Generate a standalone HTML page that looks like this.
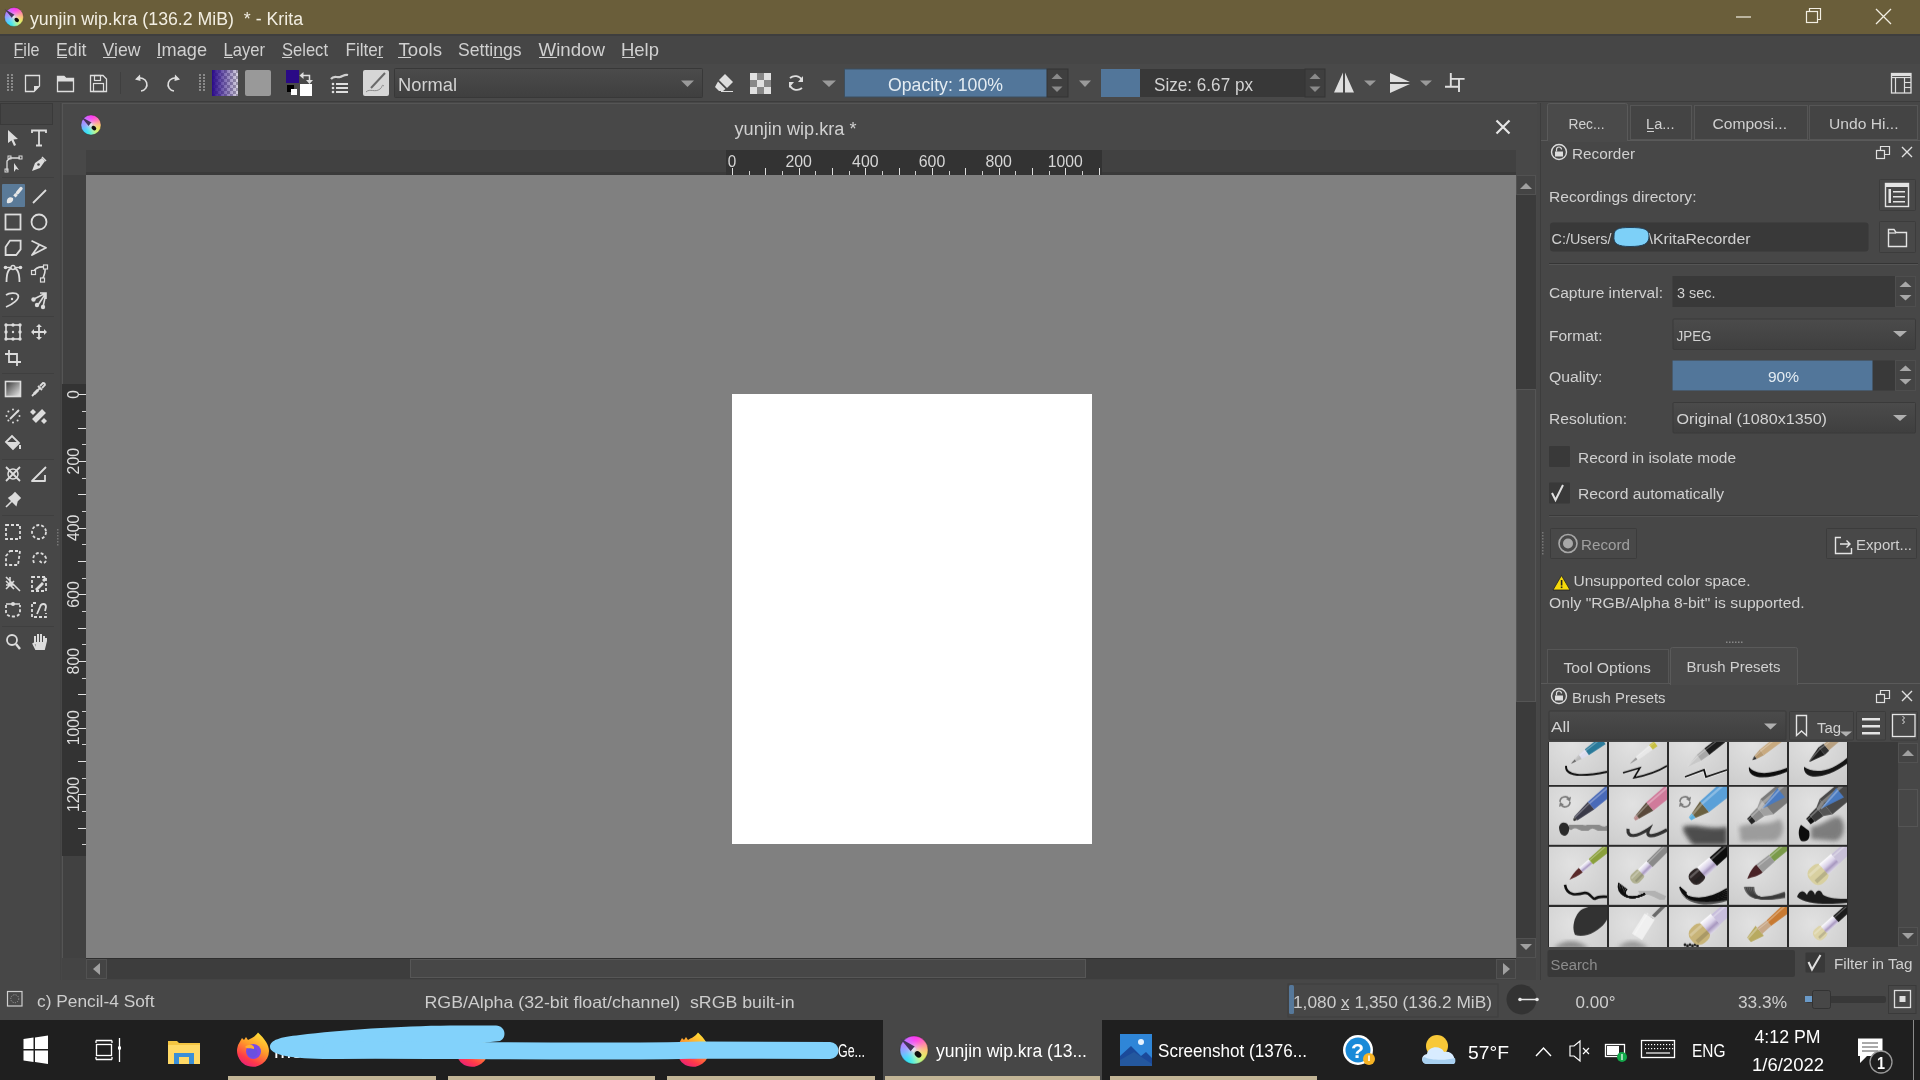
<!DOCTYPE html>
<html><head><meta charset="utf-8">
<style>
*{margin:0;padding:0}
html,body{width:1920px;height:1080px;overflow:hidden;background:#474747}
svg{display:block;will-change:transform}
text{font-family:"Liberation Sans",sans-serif;white-space:pre}
</style></head><body>
<svg width="1920" height="1080" viewBox="0 0 1920 1080" shape-rendering="auto">
<rect x="0" y="0" width="1920" height="1080" fill="#474747" />
<rect x="0" y="0" width="1920" height="34" fill="#6a5e3a" />
<defs><clipPath id="kc157"><circle cx="14" cy="17" r="9.5"/></clipPath><filter id="kf157" x="-50%" y="-50%" width="200%" height="200%"><feGaussianBlur stdDeviation="2.66"/></filter></defs><g clip-path="url(#kc157)"><g filter="url(#kf157)"><path d="M14,17 L7.58,3.22 L20.42,3.22 Z" fill="#ff2cf8"/><path d="M14,17 L19.20,2.72 L28.28,11.80 Z" fill="#ff55c8"/><path d="M14,17 L26.45,8.28 L28.68,20.93 Z" fill="#ff9a8a"/><path d="M14,17 L29.20,17.00 L23.77,28.64 Z" fill="#f8e060"/><path d="M14,17 L26.45,25.72 L15.32,32.14 Z" fill="#c8f870"/><path d="M14,17 L17.93,31.68 L5.28,29.45 Z" fill="#40f0e0"/><path d="M14,17 L7.58,30.78 L-0.68,20.93 Z" fill="#30d8ff"/><path d="M14,17 L0.22,23.42 L0.22,10.58 Z" fill="#8aa0ff"/><path d="M14,17 L-0.28,11.80 L8.80,2.72 Z" fill="#c070ff"/><circle cx="14" cy="17" r="3.3249999999999997" fill="#ffffff" opacity="0.5"/></g></g><circle cx="14" cy="17" r="9.5" fill="none" stroke="#222" stroke-opacity="0.35" stroke-width="0.76"/><g transform="translate(14,17) rotate(40)"><path d="M-12.35,0 L-1.14,-2.09 L-1.14,2.09 Z" fill="#44345a"/><rect x="-1.14" y="-1.425" width="1.9000000000000001" height="2.85" fill="#e0e0ea"/><ellipse cx="3.9899999999999998" cy="0.47500000000000003" rx="2.47" ry="1.9000000000000001" fill="#0e0e0e"/></g>
<text x="30" y="24.6" font-size="18" fill="#f2eee2" textLength="273" lengthAdjust="spacingAndGlyphs" >yunjin wip.kra (136.2 MiB)  * - Krita</text>
<line x1="1736" y1="17" x2="1751" y2="17" stroke="#f2eee2" stroke-width="1.2" />
<rect x="1806.5" y="11.5" width="11" height="11" fill="none" stroke="#f2eee2" stroke-width="1.2" />
<path d="M1809.5,11.5 V8.5 H1820.5 V19.5 H1817.5" fill="none" stroke="#f2eee2" stroke-width="1.2" />
<path d="M1876,9 L1891,24 M1891,9 L1876,24" fill="none" stroke="#f2eee2" stroke-width="1.3" />
<rect x="0" y="34" width="1920" height="30" fill="#464646" />
<rect x="0" y="34" width="1920" height="2" fill="#3e3e3e" />
<text x="13.5" y="55.8" font-size="18.2" fill="#d0d0d0" textLength="26" lengthAdjust="spacingAndGlyphs" >File</text>
<text x="56" y="55.8" font-size="18.2" fill="#d0d0d0" textLength="30.5" lengthAdjust="spacingAndGlyphs" >Edit</text>
<text x="102.5" y="55.8" font-size="18.2" fill="#d0d0d0" textLength="38" lengthAdjust="spacingAndGlyphs" >View</text>
<text x="156.5" y="55.8" font-size="18.2" fill="#d0d0d0" textLength="50.5" lengthAdjust="spacingAndGlyphs" >Image</text>
<text x="223.5" y="55.8" font-size="18.2" fill="#d0d0d0" textLength="41.5" lengthAdjust="spacingAndGlyphs" >Layer</text>
<text x="282" y="55.8" font-size="18.2" fill="#d0d0d0" textLength="46" lengthAdjust="spacingAndGlyphs" >Select</text>
<text x="345.5" y="55.8" font-size="18.2" fill="#d0d0d0" textLength="38" lengthAdjust="spacingAndGlyphs" >Filter</text>
<text x="398.5" y="55.8" font-size="18.2" fill="#d0d0d0" textLength="43.5" lengthAdjust="spacingAndGlyphs" >Tools</text>
<text x="458" y="55.8" font-size="18.2" fill="#d0d0d0" textLength="63.5" lengthAdjust="spacingAndGlyphs" >Settings</text>
<text x="538.5" y="55.8" font-size="18.2" fill="#d0d0d0" textLength="66.5" lengthAdjust="spacingAndGlyphs" >Window</text>
<text x="621" y="55.8" font-size="18.2" fill="#d0d0d0" textLength="38" lengthAdjust="spacingAndGlyphs" >Help</text>
<line x1="14" y1="57.5" x2="24" y2="57.5" stroke="#d0d0d0" stroke-width="1" />
<line x1="57" y1="57.5" x2="67" y2="57.5" stroke="#d0d0d0" stroke-width="1" />
<line x1="103" y1="57.5" x2="116" y2="57.5" stroke="#d0d0d0" stroke-width="1" />
<line x1="157" y1="57.5" x2="162" y2="57.5" stroke="#d0d0d0" stroke-width="1" />
<line x1="224" y1="57.5" x2="233" y2="57.5" stroke="#d0d0d0" stroke-width="1" />
<line x1="282" y1="57.5" x2="292" y2="57.5" stroke="#d0d0d0" stroke-width="1" />
<line x1="377" y1="57.5" x2="383" y2="57.5" stroke="#d0d0d0" stroke-width="1" />
<line x1="398" y1="57.5" x2="411" y2="57.5" stroke="#d0d0d0" stroke-width="1" />
<line x1="493" y1="57.5" x2="505" y2="57.5" stroke="#d0d0d0" stroke-width="1" />
<line x1="539" y1="57.5" x2="557" y2="57.5" stroke="#d0d0d0" stroke-width="1" />
<line x1="622" y1="57.5" x2="635" y2="57.5" stroke="#d0d0d0" stroke-width="1" />
<rect x="0" y="64" width="1920" height="38" fill="#494949" />
<rect x="0" y="101" width="1920" height="1" fill="#3c3c3c" />
<rect x="7" y="74" width="2" height="2" fill="#8a8a8a" />
<rect x="7" y="77" width="2" height="2" fill="#8a8a8a" />
<rect x="7" y="80" width="2" height="2" fill="#8a8a8a" />
<rect x="7" y="83" width="2" height="2" fill="#8a8a8a" />
<rect x="7" y="86" width="2" height="2" fill="#8a8a8a" />
<rect x="7" y="89" width="2" height="2" fill="#8a8a8a" />
<rect x="11" y="74" width="2" height="2" fill="#8a8a8a" />
<rect x="11" y="77" width="2" height="2" fill="#8a8a8a" />
<rect x="11" y="80" width="2" height="2" fill="#8a8a8a" />
<rect x="11" y="83" width="2" height="2" fill="#8a8a8a" />
<rect x="11" y="86" width="2" height="2" fill="#8a8a8a" />
<rect x="11" y="89" width="2" height="2" fill="#8a8a8a" />
<rect x="199" y="74" width="2" height="2" fill="#8a8a8a" />
<rect x="199" y="77" width="2" height="2" fill="#8a8a8a" />
<rect x="199" y="80" width="2" height="2" fill="#8a8a8a" />
<rect x="199" y="83" width="2" height="2" fill="#8a8a8a" />
<rect x="199" y="86" width="2" height="2" fill="#8a8a8a" />
<rect x="199" y="89" width="2" height="2" fill="#8a8a8a" />
<rect x="203" y="74" width="2" height="2" fill="#8a8a8a" />
<rect x="203" y="77" width="2" height="2" fill="#8a8a8a" />
<rect x="203" y="80" width="2" height="2" fill="#8a8a8a" />
<rect x="203" y="83" width="2" height="2" fill="#8a8a8a" />
<rect x="203" y="86" width="2" height="2" fill="#8a8a8a" />
<rect x="203" y="89" width="2" height="2" fill="#8a8a8a" />
<path d="M25.5,75.5 H39.5 V86 L34,91.5 H25.5 Z" fill="none" stroke="#dedede" stroke-width="1.3" />
<path d="M39.5,86 H34 V91.5 Z" fill="#dedede" />
<path d="M57.5,76.5 H64 L66,78.5 H73.5 V91.5 H57.5 Z" fill="none" stroke="#dedede" stroke-width="1.3" />
<path d="M57.5,76.5 H64 L66,78.5 H73.5 V81.5 H57.5 Z" fill="#dedede" />
<path d="M90.5,75.5 H103 L106.5,79 V91.5 H90.5 Z" fill="none" stroke="#dedede" stroke-width="1.3" />
<rect x="94.5" y="75.5" width="6" height="5" fill="none" stroke="#dedede" stroke-width="1.2" />
<rect x="93.5" y="83.5" width="10" height="8" fill="none" stroke="#dedede" stroke-width="1.2" />
<line x1="120.5" y1="72" x2="120.5" y2="94" stroke="#3f3f3f" stroke-width="1" />
<path d="M137,79 A6.5,6.5 0 1 1 141,91" fill="none" stroke="#dedede" stroke-width="1.6" />
<path d="M135,79.5 L140,74.5 L140.5,81 Z" fill="#dedede" />
<path d="M178,79 A6.5,6.5 0 1 0 174,91" fill="none" stroke="#dedede" stroke-width="1.6" />
<path d="M180,79.5 L175,74.5 L174.5,81 Z" fill="#dedede" />
<defs><linearGradient id="gsw" x1="0" x2="1"><stop offset="0" stop-color="#2a0a8a"/><stop offset="1" stop-color="#2a0a8a" stop-opacity="0"/></linearGradient>
<pattern id="chk" width="6" height="6" patternUnits="userSpaceOnUse" x="212" y="70"><rect width="6" height="6" fill="#d8d4e0"/><rect width="3" height="3" fill="#9a94a8"/><rect x="3" y="3" width="3" height="3" fill="#9a94a8"/></pattern></defs>
<rect x="212" y="70" width="26" height="26" fill="url(#chk)" />
<rect x="212" y="70" width="26" height="26" fill="url(#gsw)" />
<rect x="245" y="70" width="26" height="26" fill="#999999" rx="2" />
<rect x="286" y="70" width="13" height="13" fill="#2a0a86" />
<rect x="300" y="84" width="12" height="12" fill="#ffffff" />
<rect x="287" y="85" width="7" height="7" fill="#000000" />
<rect x="291" y="89" width="6" height="6" fill="#ffffff" />
<path d="M303,75.5 H309.5 V81" fill="none" stroke="#dedede" stroke-width="1.5" />
<path d="M299.5,75.5 L303.5,72 V79 Z" fill="#dedede" />
<path d="M306,80 H313 L309.5,84 Z" fill="#dedede" />
<path d="M331,79 C334,75 337,78 340,77 C343,76 345,74 348,75" fill="none" stroke="#d0d0d0" stroke-width="2.2" />
<circle cx="333" cy="84" r="1.3" fill="#dedede" />
<rect x="336" y="83" width="12" height="2" fill="#dedede" />
<circle cx="333" cy="88" r="1.3" fill="#dedede" />
<rect x="336" y="87" width="12" height="2" fill="#dedede" />
<circle cx="333" cy="92" r="1.3" fill="#dedede" />
<rect x="336" y="91" width="12" height="2" fill="#dedede" />
<rect x="363" y="70" width="26" height="26" fill="#d6d6d6" rx="2" />
<path d="M366,92 C370,88 375,93 380,89 C383,87 381,84 384,86" fill="none" stroke="#8a8a8a" stroke-width="1" />
<path d="M371,88 L385,73" fill="none" stroke="#6a6a6a" stroke-width="2" />
<defs><linearGradient id="cmb" x1="0" y1="0" x2="0" y2="1"><stop offset="0" stop-color="#4b4b4b"/><stop offset="1" stop-color="#3f3f3f"/></linearGradient></defs>
<rect x="394.5" y="68.5" width="308" height="29" fill="url(#cmb)" stroke="#383838" stroke-width="1" rx="1" />
<text x="398" y="91" font-size="18.5" fill="#d2d2d2" textLength="59" lengthAdjust="spacingAndGlyphs" >Normal</text>
<path d="M681,80.5 H694 L687.5,87 Z" fill="#9a9a9a" />
<path d="M723,76 L731.5,84.5 L726,90 H719 L715.5,86.5 Z" fill="none" stroke="#dedede" stroke-width="0" />
<path d="M725,74 L733,82 L727,88 L719,80 Z" fill="#dedede" />
<path d="M718,81.5 L725.5,89 L723,91 H719 L715,87 Z" fill="#dedede" />
<line x1="721" y1="91.5" x2="733" y2="91.5" stroke="#dedede" stroke-width="1" />
<rect x="750" y="73" width="7" height="7" fill="#e0e0e0" />
<rect x="750" y="80" width="7" height="7" fill="#888888" />
<rect x="750" y="87" width="7" height="7" fill="#e0e0e0" />
<rect x="757" y="73" width="7" height="7" fill="#888888" />
<rect x="757" y="80" width="7" height="7" fill="#e0e0e0" />
<rect x="757" y="87" width="7" height="7" fill="#888888" />
<rect x="764" y="73" width="7" height="7" fill="#e0e0e0" />
<rect x="764" y="80" width="7" height="7" fill="#888888" />
<rect x="764" y="87" width="7" height="7" fill="#e0e0e0" />
<path d="M790,78 A8,8 0 0 1 802,80" fill="none" stroke="#dedede" stroke-width="1.8" />
<path d="M802,88 A8,8 0 0 1 790,86" fill="none" stroke="#dedede" stroke-width="1.8" />
<path d="M803,76 V82 H798 Z" fill="#dedede" />
<path d="M789,88 V82 H794 Z" fill="#dedede" />
<path d="M822,80.5 H836 L829,87 Z" fill="#9a9a9a" />
<rect x="844.5" y="69" width="203" height="28" fill="#52769a" />
<rect x="844.5" y="69" width="203" height="28" fill="none" stroke="#3d4f5f" stroke-width="1" />
<text x="888" y="90.5" font-size="18.5" fill="#e4ecf2" textLength="115" lengthAdjust="spacingAndGlyphs" >Opacity: 100%</text>
<rect x="1047" y="69" width="21" height="28" fill="#3f3f3f" stroke="#353535" stroke-width="1" />
<path d="M1051.5,79 H1062.5 L1057,73.5 Z" fill="#8a8a8a" />
<path d="M1051.5,86.5 H1062.5 L1057,92 Z" fill="#8a8a8a" />
<path d="M1079,80.5 H1091 L1085,87 Z" fill="#9a9a9a" />
<rect x="1101" y="69" width="204" height="28" fill="#383838" />
<rect x="1101" y="69" width="39" height="28" fill="#52769a" />
<text x="1154" y="91" font-size="18.5" fill="#d2d2d2" textLength="99" lengthAdjust="spacingAndGlyphs" >Size: 6.67 px</text>
<rect x="1305" y="69" width="20" height="28" fill="#3f3f3f" stroke="#353535" stroke-width="1" />
<path d="M1309.5,79 H1320.5 L1315,73.5 Z" fill="#8a8a8a" />
<path d="M1309.5,86.5 H1320.5 L1315,92 Z" fill="#8a8a8a" />
<path d="M1334,92.5 L1343,72.5 V92.5 Z M1345,92.5 V72.5 L1354,92.5 Z" fill="#dedede" />
<path d="M1364,80.5 H1376 L1370,86 Z" fill="#9a9a9a" />
<path d="M1390,73 L1410,82 H1390 Z M1390,84 H1410 L1390,93 Z" fill="#dedede" />
<path d="M1420,80.5 H1432 L1426,86 Z" fill="#9a9a9a" />
<path d="M1450.8,73 V86.8 M1445,86.8 H1459 M1459,78.9 V92 M1450.8,78.9 H1464.6" fill="none" stroke="#dedede" stroke-width="1.9" />
<rect x="1891.5" y="73.5" width="19.5" height="19.5" fill="none" stroke="#dedede" stroke-width="1.3" />
<rect x="1891.5" y="73.5" width="19.5" height="2.5" fill="#dedede" />
<line x1="1891.5" y1="77.5" x2="1911" y2="77.5" stroke="#dedede" stroke-width="1.2" />
<line x1="1895.5" y1="77.5" x2="1895.5" y2="93" stroke="#dedede" stroke-width="1.2" />
<line x1="1904.5" y1="77.5" x2="1904.5" y2="93" stroke="#dedede" stroke-width="1.2" />
<line x1="1904.5" y1="82.5" x2="1911" y2="82.5" stroke="#dedede" stroke-width="1.1" />
<line x1="1904.5" y1="87.5" x2="1911" y2="87.5" stroke="#dedede" stroke-width="1.1" />
<rect x="0" y="102" width="60" height="878" fill="#474747" />
<rect x="0.5" y="103.5" width="52" height="21" fill="#444444" stroke="#3a3a3a" stroke-width="1" />
<line x1="60.5" y1="103" x2="60.5" y2="980" stroke="#434343" stroke-width="1" />
<rect x="2" y="184" width="23" height="23" fill="#5a7a98" rx="1" />
<path d="M8,130 L18,139 L13.5,139.5 L16,145 L14,146 L11.5,140.5 L8,143 Z" fill="#dcdcdc" />
<path d="M32,133 V130.5 H46 V133 M39,130.5 V145.5 M36,145.5 H42" fill="none" stroke="#dcdcdc" stroke-width="1.8" />
<path d="M7,171 V161 L10,158 H20" fill="none" stroke="#dcdcdc" stroke-width="1.3" />
<rect x="5" y="169" width="3" height="3" fill="none" stroke="#dcdcdc" stroke-width="1" />
<rect x="19" y="156" width="3" height="3" fill="none" stroke="#dcdcdc" stroke-width="1" />
<rect x="8" y="156" width="3" height="3" fill="none" stroke="#dcdcdc" stroke-width="1" />
<path d="M14,163 L19,170 L16,169 L14,172 Z" fill="#dcdcdc" />
<path d="M32,171 L35,163 L42,158 L45,161 L40,168 Z" fill="#dcdcdc" />
<circle cx="38.5" cy="164.5" r="1.3" fill="#474747" />
<line x1="42" y1="157" x2="46" y2="161" stroke="#dcdcdc" stroke-width="1.5" />
<line x1="2" y1="177.5" x2="54" y2="177.5" stroke="#3f3f3f" stroke-width="1" />
<path d="M7,203 C6,198 10,196 13,198 C14,201 11,204 7,203 Z" fill="#e6e6e6" />
<path d="M14.5,196.5 L16.5,194" fill="none" stroke="#e6e6e6" stroke-width="3.2" />
<path d="M17.5,192.8 L21,188.5" fill="none" stroke="#e6e6e6" stroke-width="3.4" stroke-linecap="round"/>
<line x1="33" y1="203" x2="46" y2="190" stroke="#dcdcdc" stroke-width="1.8" />
<rect x="5.5" y="214.5" width="15" height="15" fill="none" stroke="#dcdcdc" stroke-width="1.8" />
<circle cx="39" cy="222" r="7.5" fill="none" stroke="#dcdcdc" stroke-width="1.8" />
<path d="M5.6,247 L10,240.6 H20.6 V249.4 L16.2,255 H5.6 Z" fill="none" stroke="#dcdcdc" stroke-width="1.8" />
<path d="M31.5,240.8 L46,247.8 L32,255 L39.5,244.5" fill="none" stroke="#dcdcdc" stroke-width="1.8" stroke-linejoin="round"/>
<path d="M6.5,282 C6.5,272 9,268 13,268 C17,268 19.5,272 19.5,282" fill="none" stroke="#dcdcdc" stroke-width="1.8" />
<line x1="5" y1="267.5" x2="21" y2="267.5" stroke="#dcdcdc" stroke-width="1.4" />
<circle cx="5.5" cy="267.5" r="1.8" fill="#dcdcdc" />
<circle cx="20.5" cy="267.5" r="1.8" fill="#dcdcdc" />
<circle cx="13" cy="267.5" r="2" fill="#474747" stroke="#dcdcdc" stroke-width="1.3" />
<path d="M33.5,272 C35,268 40,266.5 45,267 C45.5,271 44,276 42.5,279" fill="none" stroke="#dcdcdc" stroke-width="1.6" />
<rect x="31.5" y="270.5" width="4" height="4" fill="#474747" stroke="#dcdcdc" stroke-width="1.2" />
<rect x="43.5" y="265" width="4" height="4" fill="#474747" stroke="#dcdcdc" stroke-width="1.2" />
<rect x="40.5" y="278" width="4" height="4" fill="#474747" stroke="#dcdcdc" stroke-width="1.2" />
<path d="M6,307 C13,304 20,299 18,295 C16,292 9,293 6,295" fill="none" stroke="#dcdcdc" stroke-width="1.8" />
<circle cx="12" cy="299" r="1.2" fill="#dcdcdc" />
<path d="M34,299 L46,293 M38,305 L46,293 M43,307 L46,293 M40,293 H46 V299" fill="none" stroke="#dcdcdc" stroke-width="1.6" />
<circle cx="33.5" cy="299.5" r="2.2" fill="#dcdcdc" />
<circle cx="37" cy="305" r="2.2" fill="#dcdcdc" />
<circle cx="43" cy="307" r="2.2" fill="#dcdcdc" />
<line x1="2" y1="316.5" x2="54" y2="316.5" stroke="#3f3f3f" stroke-width="1" />
<rect x="6" y="325" width="14" height="14" fill="none" stroke="#dcdcdc" stroke-width="1.6" />
<circle cx="6" cy="325" r="1.7" fill="#dcdcdc" />
<circle cx="20" cy="325" r="1.7" fill="#dcdcdc" />
<circle cx="6" cy="339" r="1.7" fill="#dcdcdc" />
<circle cx="20" cy="339" r="1.7" fill="#dcdcdc" />
<circle cx="13" cy="325" r="1.7" fill="#dcdcdc" />
<circle cx="13" cy="339" r="1.7" fill="#dcdcdc" />
<circle cx="6" cy="332" r="1.7" fill="#dcdcdc" />
<circle cx="20" cy="332" r="1.7" fill="#dcdcdc" />
<circle cx="13" cy="332" r="1.2" fill="#dcdcdc" />
<path d="M32,332 H46 M39,325 V339" fill="none" stroke="#dcdcdc" stroke-width="1.8" />
<path d="M31,332 L34,329 V335 Z M47,332 L44,329 V335 Z M39,324 L36,327 H42 Z M39,340 L36,337 H42 Z" fill="#dcdcdc" />
<path d="M9,350 V362 H21 M5,354 H17 V366" fill="none" stroke="#dcdcdc" stroke-width="1.8" />
<line x1="2" y1="373.5" x2="54" y2="373.5" stroke="#3f3f3f" stroke-width="1" />
<defs><linearGradient id="tgr" x1="0" y1="0" x2="1" y2="1"><stop offset="0" stop-color="#333"/><stop offset="1" stop-color="#eee"/></linearGradient></defs>
<rect x="5.5" y="381.5" width="15" height="15" fill="url(#tgr)" stroke="#dcdcdc" stroke-width="1.6" />
<path d="M32,396 L40,388 M38,386 L42,390 M40,386 L43,383 A2,2 0 0 1 45,385 L42,388" fill="none" stroke="#dcdcdc" stroke-width="1.8" />
<path d="M33,393 L37,389 L39,391 L35,395 Z" fill="#dcdcdc" />
<circle cx="19.5" cy="416.0" r="1" fill="#dcdcdc" />
<circle cx="17.59619407771256" cy="420.59619407771254" r="1" fill="#dcdcdc" />
<circle cx="13.0" cy="422.5" r="1" fill="#dcdcdc" />
<circle cx="8.403805922287441" cy="420.59619407771254" r="1" fill="#dcdcdc" />
<circle cx="6.5" cy="416.0" r="1" fill="#dcdcdc" />
<circle cx="8.40380592228744" cy="411.40380592228746" r="1" fill="#dcdcdc" />
<circle cx="12.999999999999998" cy="409.5" r="1" fill="#dcdcdc" />
<circle cx="17.596194077712557" cy="411.40380592228746" r="1" fill="#dcdcdc" />
<line x1="10" y1="419" x2="19" y2="410" stroke="#dcdcdc" stroke-width="1.8" />
<line x1="34" y1="421" x2="44" y2="411" stroke="#dcdcdc" stroke-width="5.5" />
<path d="M33,409 L36,412 L33,415 L30,412 Z" fill="#dcdcdc" />
<path d="M44,418 L47,421 L44,424 L41,421 Z" fill="#dcdcdc" />
<path d="M6,442 L12,436 L19,443 L13,449 Z" fill="none" stroke="#dcdcdc" stroke-width="1.8" />
<path d="M6,442 H19 L13,449 Z" fill="#dcdcdc" />
<path d="M20,445 V449" fill="none" stroke="#dcdcdc" stroke-width="2" />
<line x1="2" y1="459.5" x2="54" y2="459.5" stroke="#3f3f3f" stroke-width="1" />
<circle cx="13" cy="474" r="5" fill="none" stroke="#dcdcdc" stroke-width="1.5" />
<line x1="6" y1="467" x2="20" y2="481" stroke="#dcdcdc" stroke-width="1.8" />
<line x1="20" y1="467" x2="6" y2="481" stroke="#dcdcdc" stroke-width="1.8" />
<path d="M46,467 L32,481 H45 V475" fill="none" stroke="#dcdcdc" stroke-width="1.8" stroke-linejoin="round"/>
<path d="M6,507 L12,501 M9,498 L16,505 L17,501 L20,498 L15,493 L12,496 Z" fill="#dcdcdc" stroke="#dcdcdc" stroke-width="1.6" />
<line x1="2" y1="515.5" x2="54" y2="515.5" stroke="#3f3f3f" stroke-width="1" />
<rect x="6" y="525" width="14" height="14" fill="none" stroke="#dcdcdc" stroke-width="1.8" stroke-dasharray="3,2"/>
<circle cx="39" cy="532" r="7" fill="none" stroke="#dcdcdc" stroke-width="1.8" stroke-dasharray="3,2"/>
<path d="M10,551 H20 L18,565 H6 V556 Z" fill="none" stroke="#dcdcdc" stroke-width="1.8" stroke-dasharray="3,2"/>
<path d="M34,563 C30,553 42,549 46,558 C47,563 42,565 39,560" fill="none" stroke="#dcdcdc" stroke-width="1.8" stroke-dasharray="3,2"/>
<path d="M6,577 L20,591 M6,585 H14 M10,577 V585 M6,581 L14,589 M6,589 L14,581" fill="none" stroke="#dcdcdc" stroke-width="1.6" />
<rect x="32" y="577" width="14" height="14" fill="none" stroke="#dcdcdc" stroke-width="1.8" stroke-dasharray="3,2"/>
<path d="M35,589 L42,582 L44,584 L37,591 Z M42,580 L45,577 L47,579 L44,582 Z" fill="#dcdcdc" />
<path d="M6,605 V612 C6,618 20,618 20,612 V605" fill="none" stroke="#dcdcdc" stroke-width="1.8" stroke-dasharray="3,2"/>
<line x1="6" y1="604" x2="20" y2="604" stroke="#dcdcdc" stroke-width="1.5" />
<circle cx="13" cy="604" r="2" fill="#dcdcdc" />
<path d="M36,603 H32 V617 H46 V613" fill="none" stroke="#dcdcdc" stroke-width="1.8" stroke-dasharray="3,2"/>
<path d="M37,614 L40,607 C41,603 46,603 46,607 L45,611" fill="none" stroke="#dcdcdc" stroke-width="1.8" />
<line x1="2" y1="626.5" x2="54" y2="626.5" stroke="#3f3f3f" stroke-width="1" />
<circle cx="12" cy="640" r="5" fill="none" stroke="#dcdcdc" stroke-width="1.8" />
<line x1="16" y1="644" x2="20" y2="649" stroke="#dcdcdc" stroke-width="2.4" />
<path d="M33,643 L36,649 H44 L46,641 V638 M35,644 V636 M38,642 V634 M41,642 V634 M44,642 V636" fill="none" stroke="#dcdcdc" stroke-width="2" />
<path d="M35,642 H45 V648 H36 Z" fill="#dcdcdc" />
<rect x="57" y="529" width="1.5" height="1.5" fill="#777777" />
<rect x="57" y="532" width="1.5" height="1.5" fill="#777777" />
<rect x="57" y="535" width="1.5" height="1.5" fill="#777777" />
<rect x="57" y="538" width="1.5" height="1.5" fill="#777777" />
<rect x="57" y="541" width="1.5" height="1.5" fill="#777777" />
<rect x="57" y="544" width="1.5" height="1.5" fill="#777777" />
<rect x="62" y="103" width="1475" height="877" fill="#484848" />
<line x1="62" y1="103.5" x2="1537" y2="103.5" stroke="#555555" stroke-width="1" />
<line x1="62.5" y1="103" x2="62.5" y2="980" stroke="#555555" stroke-width="1" />
<defs><clipPath id="kc1035"><circle cx="91" cy="125" r="10"/></clipPath><filter id="kf1035" x="-50%" y="-50%" width="200%" height="200%"><feGaussianBlur stdDeviation="2.8000000000000003"/></filter></defs><g clip-path="url(#kc1035)"><g filter="url(#kf1035)"><path d="M91,125 L84.24,110.50 L97.76,110.50 Z" fill="#ff2cf8"/><path d="M91,125 L96.47,109.96 L106.04,119.53 Z" fill="#ff55c8"/><path d="M91,125 L104.11,115.82 L106.45,129.14 Z" fill="#ff9a8a"/><path d="M91,125 L107.00,125.00 L101.28,137.26 Z" fill="#f8e060"/><path d="M91,125 L104.11,134.18 L92.39,140.94 Z" fill="#c8f870"/><path d="M91,125 L95.14,140.45 L81.82,138.11 Z" fill="#40f0e0"/><path d="M91,125 L84.24,139.50 L75.55,129.14 Z" fill="#30d8ff"/><path d="M91,125 L76.50,131.76 L76.50,118.24 Z" fill="#8aa0ff"/><path d="M91,125 L75.96,119.53 L85.53,109.96 Z" fill="#c070ff"/><circle cx="91" cy="125" r="3.5" fill="#ffffff" opacity="0.5"/></g></g><circle cx="91" cy="125" r="10" fill="none" stroke="#222" stroke-opacity="0.35" stroke-width="0.8"/><g transform="translate(91,125) rotate(40)"><path d="M-13.0,0 L-1.2,-2.2 L-1.2,2.2 Z" fill="#44345a"/><rect x="-1.2" y="-1.5" width="2.0" height="3.0" fill="#e0e0ea"/><ellipse cx="4.2" cy="0.5" rx="2.6" ry="2.0" fill="#0e0e0e"/></g>
<text x="734.5" y="135" font-size="18" fill="#d0d0d0" textLength="122" lengthAdjust="spacingAndGlyphs" >yunjin wip.kra *</text>
<path d="M1496.5,120.5 L1509.5,133.5 M1509.5,120.5 L1496.5,133.5" fill="none" stroke="#e6e6e6" stroke-width="2.2" />
<rect x="86" y="150" width="1430" height="25" fill="#414141" />
<rect x="86" y="172" width="1430" height="3" fill="#3a3a3a" />
<rect x="63" y="175" width="23" height="783" fill="#414141" />
<rect x="726" y="150" width="376" height="25" fill="#333333" />
<rect x="62" y="384" width="24" height="472" fill="#333333" />
<line x1="732.5" y1="168" x2="732.5" y2="175" stroke="#e0e0e0" stroke-width="1" />
<line x1="749.5" y1="171" x2="749.5" y2="175" stroke="#d0d0d0" stroke-width="1" />
<line x1="765.5" y1="168" x2="765.5" y2="175" stroke="#e0e0e0" stroke-width="1" />
<line x1="782.5" y1="171" x2="782.5" y2="175" stroke="#d0d0d0" stroke-width="1" />
<line x1="799.5" y1="168" x2="799.5" y2="175" stroke="#e0e0e0" stroke-width="1" />
<line x1="815.5" y1="171" x2="815.5" y2="175" stroke="#d0d0d0" stroke-width="1" />
<line x1="832.5" y1="168" x2="832.5" y2="175" stroke="#e0e0e0" stroke-width="1" />
<line x1="849.5" y1="171" x2="849.5" y2="175" stroke="#d0d0d0" stroke-width="1" />
<line x1="865.5" y1="168" x2="865.5" y2="175" stroke="#e0e0e0" stroke-width="1" />
<line x1="882.5" y1="171" x2="882.5" y2="175" stroke="#d0d0d0" stroke-width="1" />
<line x1="899.5" y1="168" x2="899.5" y2="175" stroke="#e0e0e0" stroke-width="1" />
<line x1="915.5" y1="171" x2="915.5" y2="175" stroke="#d0d0d0" stroke-width="1" />
<line x1="932.5" y1="168" x2="932.5" y2="175" stroke="#e0e0e0" stroke-width="1" />
<line x1="949.5" y1="171" x2="949.5" y2="175" stroke="#d0d0d0" stroke-width="1" />
<line x1="965.5" y1="168" x2="965.5" y2="175" stroke="#e0e0e0" stroke-width="1" />
<line x1="982.5" y1="171" x2="982.5" y2="175" stroke="#d0d0d0" stroke-width="1" />
<line x1="999.5" y1="168" x2="999.5" y2="175" stroke="#e0e0e0" stroke-width="1" />
<line x1="1015.5" y1="171" x2="1015.5" y2="175" stroke="#d0d0d0" stroke-width="1" />
<line x1="1032.5" y1="168" x2="1032.5" y2="175" stroke="#e0e0e0" stroke-width="1" />
<line x1="1049.5" y1="171" x2="1049.5" y2="175" stroke="#d0d0d0" stroke-width="1" />
<line x1="1065.5" y1="168" x2="1065.5" y2="175" stroke="#e0e0e0" stroke-width="1" />
<line x1="1082.5" y1="171" x2="1082.5" y2="175" stroke="#d0d0d0" stroke-width="1" />
<line x1="1099.5" y1="168" x2="1099.5" y2="175" stroke="#e0e0e0" stroke-width="1" />
<text x="727.75" y="167" font-size="16.5" fill="#d6d6d6" textLength="8.5" lengthAdjust="spacingAndGlyphs" >0</text>
<text x="785.4166666666666" y="167" font-size="16.5" fill="#d6d6d6" textLength="26.5" lengthAdjust="spacingAndGlyphs" >200</text>
<text x="852.0833333333334" y="167" font-size="16.5" fill="#d6d6d6" textLength="26.5" lengthAdjust="spacingAndGlyphs" >400</text>
<text x="918.75" y="167" font-size="16.5" fill="#d6d6d6" textLength="26.5" lengthAdjust="spacingAndGlyphs" >600</text>
<text x="985.4166666666667" y="167" font-size="16.5" fill="#d6d6d6" textLength="26.5" lengthAdjust="spacingAndGlyphs" >800</text>
<text x="1047.8333333333333" y="167" font-size="16.5" fill="#d6d6d6" textLength="35" lengthAdjust="spacingAndGlyphs" >1000</text>
<line x1="78" y1="394.5" x2="86" y2="394.5" stroke="#e0e0e0" stroke-width="1" />
<line x1="82" y1="411.5" x2="86" y2="411.5" stroke="#d0d0d0" stroke-width="1" />
<line x1="78" y1="428.5" x2="86" y2="428.5" stroke="#e0e0e0" stroke-width="1" />
<line x1="82" y1="444.5" x2="86" y2="444.5" stroke="#d0d0d0" stroke-width="1" />
<line x1="78" y1="461.5" x2="86" y2="461.5" stroke="#e0e0e0" stroke-width="1" />
<line x1="82" y1="478.5" x2="86" y2="478.5" stroke="#d0d0d0" stroke-width="1" />
<line x1="78" y1="494.5" x2="86" y2="494.5" stroke="#e0e0e0" stroke-width="1" />
<line x1="82" y1="511.5" x2="86" y2="511.5" stroke="#d0d0d0" stroke-width="1" />
<line x1="78" y1="528.5" x2="86" y2="528.5" stroke="#e0e0e0" stroke-width="1" />
<line x1="82" y1="544.5" x2="86" y2="544.5" stroke="#d0d0d0" stroke-width="1" />
<line x1="78" y1="561.5" x2="86" y2="561.5" stroke="#e0e0e0" stroke-width="1" />
<line x1="82" y1="578.5" x2="86" y2="578.5" stroke="#d0d0d0" stroke-width="1" />
<line x1="78" y1="594.5" x2="86" y2="594.5" stroke="#e0e0e0" stroke-width="1" />
<line x1="82" y1="611.5" x2="86" y2="611.5" stroke="#d0d0d0" stroke-width="1" />
<line x1="78" y1="628.5" x2="86" y2="628.5" stroke="#e0e0e0" stroke-width="1" />
<line x1="82" y1="644.5" x2="86" y2="644.5" stroke="#d0d0d0" stroke-width="1" />
<line x1="78" y1="661.5" x2="86" y2="661.5" stroke="#e0e0e0" stroke-width="1" />
<line x1="82" y1="678.5" x2="86" y2="678.5" stroke="#d0d0d0" stroke-width="1" />
<line x1="78" y1="694.5" x2="86" y2="694.5" stroke="#e0e0e0" stroke-width="1" />
<line x1="82" y1="711.5" x2="86" y2="711.5" stroke="#d0d0d0" stroke-width="1" />
<line x1="78" y1="728.5" x2="86" y2="728.5" stroke="#e0e0e0" stroke-width="1" />
<line x1="82" y1="744.5" x2="86" y2="744.5" stroke="#d0d0d0" stroke-width="1" />
<line x1="78" y1="761.5" x2="86" y2="761.5" stroke="#e0e0e0" stroke-width="1" />
<line x1="82" y1="778.5" x2="86" y2="778.5" stroke="#d0d0d0" stroke-width="1" />
<line x1="78" y1="794.5" x2="86" y2="794.5" stroke="#e0e0e0" stroke-width="1" />
<line x1="82" y1="811.5" x2="86" y2="811.5" stroke="#d0d0d0" stroke-width="1" />
<line x1="78" y1="828.5" x2="86" y2="828.5" stroke="#e0e0e0" stroke-width="1" />
<line x1="82" y1="844.5" x2="86" y2="844.5" stroke="#d0d0d0" stroke-width="1" />
<g transform="translate(79,394.5) rotate(-90)"><text x="-4.25" y="0" font-size="16.5" fill="#dedede" textLength="8.5" lengthAdjust="spacingAndGlyphs">0</text></g>
<g transform="translate(79,461.1666666666667) rotate(-90)"><text x="-13.25" y="0" font-size="16.5" fill="#dedede" textLength="26.5" lengthAdjust="spacingAndGlyphs">200</text></g>
<g transform="translate(79,527.8333333333334) rotate(-90)"><text x="-13.25" y="0" font-size="16.5" fill="#dedede" textLength="26.5" lengthAdjust="spacingAndGlyphs">400</text></g>
<g transform="translate(79,594.5) rotate(-90)"><text x="-13.25" y="0" font-size="16.5" fill="#dedede" textLength="26.5" lengthAdjust="spacingAndGlyphs">600</text></g>
<g transform="translate(79,661.1666666666667) rotate(-90)"><text x="-13.25" y="0" font-size="16.5" fill="#dedede" textLength="26.5" lengthAdjust="spacingAndGlyphs">800</text></g>
<g transform="translate(79,727.8333333333333) rotate(-90)"><text x="-17.5" y="0" font-size="16.5" fill="#dedede" textLength="35" lengthAdjust="spacingAndGlyphs">1000</text></g>
<g transform="translate(79,794.5) rotate(-90)"><text x="-17.5" y="0" font-size="16.5" fill="#dedede" textLength="35" lengthAdjust="spacingAndGlyphs">1200</text></g>
<rect x="86" y="175" width="1430" height="783" fill="#808080" />
<rect x="732" y="394" width="360" height="450" fill="#ffffff" />
<rect x="1516" y="175" width="20" height="783" fill="#3b3b3b" />
<rect x="1516.5" y="175.5" width="19" height="19" fill="#444444" stroke="#525252" stroke-width="1" />
<path d="M1520,189 H1532 L1526,183 Z" fill="#a0a0a0" />
<rect x="1516.5" y="389.5" width="19" height="312" fill="#474747" stroke="#555555" stroke-width="1" />
<rect x="1516.5" y="938.5" width="19" height="19" fill="#444444" stroke="#525252" stroke-width="1" />
<path d="M1520,944 H1532 L1526,950 Z" fill="#a0a0a0" />
<rect x="62" y="958" width="1474" height="22" fill="#444444" />
<rect x="86" y="958" width="1430" height="21" fill="#3d3d3d" />
<rect x="86.5" y="959.5" width="20" height="19" fill="#444444" stroke="#525252" stroke-width="1" />
<path d="M100,963 V975 L93,969 Z" fill="#a0a0a0" />
<rect x="410.5" y="959.5" width="675" height="18" fill="#474747" stroke="#575757" stroke-width="1" />
<rect x="1496.5" y="959.5" width="19" height="19" fill="#444444" stroke="#525252" stroke-width="1" />
<path d="M1503,963 V975 L1510,969 Z" fill="#a0a0a0" />
<line x1="86" y1="958.5" x2="1516" y2="958.5" stroke="#2e2e2e" stroke-width="1" />
<rect x="1537" y="102" width="383" height="880" fill="#474747" />
<line x1="1540.5" y1="103" x2="1540.5" y2="980" stroke="#3d3d3d" stroke-width="1" />
<line x1="1541" y1="140.5" x2="1920" y2="140.5" stroke="#5a5a5a" stroke-width="1" />
<rect x="1630.5" y="105.5" width="61" height="34" fill="#444444" stroke="#565656" stroke-width="1" />
<rect x="1694.5" y="105.5" width="113" height="34" fill="#444444" stroke="#565656" stroke-width="1" />
<rect x="1809.5" y="105.5" width="108" height="34" fill="#444444" stroke="#565656" stroke-width="1" />
<path d="M1547.5,141 V105.5 Q1547.5,103.5 1549.5,103.5 H1625.5 Q1627.5,103.5 1627.5,105.5 V141" fill="#4a4a4a" stroke="#5a5a5a" stroke-width="1" />
<rect x="1548" y="139" width="79" height="3" fill="#4a4a4a" />
<text x="1568.5" y="128.5" font-size="15.5" fill="#d0d0d0" textLength="36" lengthAdjust="spacingAndGlyphs" >Rec...</text>
<text x="1646" y="128.5" font-size="15.5" fill="#d0d0d0" textLength="28.5" lengthAdjust="spacingAndGlyphs" >La...</text>
<line x1="1647" y1="131.5" x2="1654" y2="131.5" stroke="#d0d0d0" stroke-width="1" />
<text x="1712.5" y="128.5" font-size="15.5" fill="#d0d0d0" textLength="74.5" lengthAdjust="spacingAndGlyphs" >Composi...</text>
<text x="1829" y="128.5" font-size="15.5" fill="#d0d0d0" textLength="69.5" lengthAdjust="spacingAndGlyphs" >Undo Hi...</text>
<circle cx="1559" cy="152" r="7.5" fill="none" stroke="#dcdcdc" stroke-width="1.4" />
<rect x="1555" y="151.5" width="8" height="5" fill="#dcdcdc" />
<path d="M1556.5,151.5 V149.5 A2.5,2.5 0 0 1 1561.5,149.5" fill="none" stroke="#dcdcdc" stroke-width="1.2" />
<text x="1572" y="158.5" font-size="15.5" fill="#d0d0d0" textLength="63" lengthAdjust="spacingAndGlyphs" >Recorder</text>
<rect x="1876.5" y="150.5" width="8" height="8" fill="none" stroke="#e0e0e0" stroke-width="1.2" />
<path d="M1880.5,150.5 V146.5 H1889.5 V154.5 H1884.5" fill="none" stroke="#e0e0e0" stroke-width="1.2" />
<path d="M1902,147 L1912,157 M1912,147 L1902,157" fill="none" stroke="#e0e0e0" stroke-width="1.4" />
<text x="1549" y="202" font-size="15.5" fill="#d0d0d0" textLength="147.5" lengthAdjust="spacingAndGlyphs" >Recordings directory:</text>
<rect x="1879.5" y="179.5" width="36" height="31" fill="#484848" stroke="#3c3c3c" stroke-width="1" rx="1" />
<rect x="1885.5" y="183.5" width="23" height="23" fill="none" stroke="#e4e4e4" stroke-width="1.4" />
<rect x="1886" y="184" width="22" height="3" fill="#e4e4e4" />
<rect x="1888.5" y="189" width="2.5" height="14" fill="#e4e4e4" />
<rect x="1893" y="191" width="12" height="1.5" fill="#e4e4e4" />
<rect x="1893" y="196" width="12" height="1.5" fill="#e4e4e4" />
<rect x="1893" y="201" width="12" height="1.5" fill="#e4e4e4" />
<rect x="1550" y="222.5" width="318.5" height="29" fill="#393939" rx="3" />
<text x="1551.5" y="244" font-size="15.5" fill="#d0d0d0" textLength="60" lengthAdjust="spacingAndGlyphs" >C:/Users/</text>
<text x="1648.5" y="244" font-size="15.5" fill="#d0d0d0" textLength="102" lengthAdjust="spacingAndGlyphs" >\KritaRecorder</text>
<path d="M1614,236 C1614,229 1618,227.5 1630,227.5 C1644,227.5 1649,229 1649,236 C1649,244 1644,246.5 1630,246.5 C1618,246.5 1613,244 1614,236 Z" fill="#7dd0f8" stroke="#23415a" stroke-width="1" />
<rect x="1879.5" y="221.5" width="36" height="31" fill="#484848" stroke="#3c3c3c" stroke-width="1" rx="1" />
<path d="M1888.5,229.5 H1894 L1896,232.5 H1906.5 V246.5 H1888.5 Z" fill="none" stroke="#e4e4e4" stroke-width="1.4" />
<line x1="1888.5" y1="233" x2="1896" y2="233" stroke="#e4e4e4" stroke-width="1.2" />
<line x1="1549" y1="263.5" x2="1918" y2="263.5" stroke="#353535" stroke-width="1" />
<line x1="1549" y1="264.5" x2="1918" y2="264.5" stroke="#555555" stroke-width="1" />
<text x="1549" y="298" font-size="15.5" fill="#d0d0d0" textLength="114" lengthAdjust="spacingAndGlyphs" >Capture interval:</text>
<rect x="1672.5" y="276" width="223" height="31" fill="#393939" />
<text x="1677" y="298" font-size="15.5" fill="#d2d2d2" textLength="38.5" lengthAdjust="spacingAndGlyphs" >3 sec.</text>
<rect x="1895.5" y="276.5" width="20" height="30" fill="#444444" stroke="#4e4e4e" stroke-width="1" />
<path d="M1899.5,287 H1911.5 L1905.5,281.5 Z" fill="#a8a8a8" />
<path d="M1899.5,295 H1911.5 L1905.5,300.5 Z" fill="#a8a8a8" />
<text x="1549" y="340.5" font-size="15.5" fill="#d0d0d0" textLength="53.5" lengthAdjust="spacingAndGlyphs" >Format:</text>
<rect x="1673" y="319" width="242.5" height="30.5" fill="url(#cmb)" stroke="#3a3a3a" stroke-width="1" rx="1" />
<text x="1676.5" y="340.5" font-size="15.5" fill="#d2d2d2" textLength="35" lengthAdjust="spacingAndGlyphs" >JPEG</text>
<path d="M1893,331 H1907 L1900,337 Z" fill="#b0b0b0" />
<text x="1549" y="382" font-size="15.5" fill="#d0d0d0" textLength="53.5" lengthAdjust="spacingAndGlyphs" >Quality:</text>
<rect x="1672.5" y="360.5" width="223" height="30" fill="#393939" />
<rect x="1672.5" y="360.5" width="200" height="30" fill="#52769a" />
<text x="1768" y="382" font-size="15.5" fill="#e4ecf2" textLength="31" lengthAdjust="spacingAndGlyphs" >90%</text>
<rect x="1895.5" y="360.5" width="20" height="30" fill="#444444" stroke="#4e4e4e" stroke-width="1" />
<path d="M1899.5,371 H1911.5 L1905.5,365.5 Z" fill="#a8a8a8" />
<path d="M1899.5,379 H1911.5 L1905.5,384.5 Z" fill="#a8a8a8" />
<text x="1549" y="424" font-size="15.5" fill="#d0d0d0" textLength="78" lengthAdjust="spacingAndGlyphs" >Resolution:</text>
<rect x="1673" y="402.5" width="242.5" height="30.5" fill="url(#cmb)" stroke="#3a3a3a" stroke-width="1" rx="1" />
<text x="1676.5" y="424" font-size="15.5" fill="#d2d2d2" textLength="150.5" lengthAdjust="spacingAndGlyphs" >Original (1080x1350)</text>
<path d="M1893,415 H1907 L1900,421 Z" fill="#b0b0b0" />
<rect x="1549" y="446" width="21" height="21" fill="#393939" rx="1" />
<text x="1578" y="463" font-size="15.5" fill="#d0d0d0" textLength="158" lengthAdjust="spacingAndGlyphs" >Record in isolate mode</text>
<rect x="1549" y="482.5" width="21" height="21" fill="#393939" rx="1" />
<path d="M1552,493 L1555.5,500 L1563,485" fill="none" stroke="#e0e0e0" stroke-width="2" />
<text x="1578" y="499" font-size="15.5" fill="#d0d0d0" textLength="146" lengthAdjust="spacingAndGlyphs" >Record automatically</text>
<line x1="1549" y1="515.5" x2="1918" y2="515.5" stroke="#3a3a3a" stroke-width="1" />
<line x1="1549" y1="516.5" x2="1918" y2="516.5" stroke="#525252" stroke-width="1" />
<rect x="1542" y="532" width="1.5" height="1.5" fill="#777777" />
<rect x="1542" y="535" width="1.5" height="1.5" fill="#777777" />
<rect x="1542" y="538" width="1.5" height="1.5" fill="#777777" />
<rect x="1542" y="541" width="1.5" height="1.5" fill="#777777" />
<rect x="1542" y="544" width="1.5" height="1.5" fill="#777777" />
<rect x="1542" y="547" width="1.5" height="1.5" fill="#777777" />
<rect x="1542" y="550" width="1.5" height="1.5" fill="#777777" />
<rect x="1542" y="553" width="1.5" height="1.5" fill="#777777" />
<rect x="1550.5" y="528.5" width="86" height="30" fill="#484848" stroke="#3c3c3c" stroke-width="1" rx="1" />
<circle cx="1568" cy="543.5" r="9" fill="none" stroke="#a8a8a8" stroke-width="1.6" />
<circle cx="1568" cy="543.5" r="5" fill="#a8a8a8" />
<text x="1581" y="550" font-size="15.5" fill="#a0a0a0" textLength="49" lengthAdjust="spacingAndGlyphs" >Record</text>
<rect x="1826.5" y="528.5" width="90" height="30" fill="#484848" stroke="#3c3c3c" stroke-width="1" rx="1" />
<path d="M1841,537.5 H1835.5 V553.5 H1851.5 V548" fill="none" stroke="#e4e4e4" stroke-width="1.4" />
<path d="M1840,544 H1850 M1846.5,540.5 L1850,544 L1846.5,547.5" fill="none" stroke="#e4e4e4" stroke-width="1.4" />
<text x="1856" y="550" font-size="15.5" fill="#d0d0d0" textLength="56" lengthAdjust="spacingAndGlyphs" >Export...</text>
<path d="M1561.5,575.5 L1570,590 H1553 Z" fill="#f5d90a" stroke="#222" stroke-width="0.8" />
<rect x="1560.8" y="580" width="1.6" height="5.5" fill="#222" />
<rect x="1560.8" y="586.5" width="1.6" height="1.6" fill="#222" />
<text x="1573.5" y="586" font-size="15.5" fill="#d0d0d0" textLength="177" lengthAdjust="spacingAndGlyphs" >Unsupported color space.</text>
<text x="1549" y="608" font-size="15.5" fill="#d0d0d0" textLength="255.5" lengthAdjust="spacingAndGlyphs" >Only &quot;RGB/Alpha 8-bit&quot; is supported.</text>
<rect x="1726" y="641.5" width="1.5" height="1.5" fill="#888888" />
<rect x="1729" y="641.5" width="1.5" height="1.5" fill="#888888" />
<rect x="1732" y="641.5" width="1.5" height="1.5" fill="#888888" />
<rect x="1735" y="641.5" width="1.5" height="1.5" fill="#888888" />
<rect x="1738" y="641.5" width="1.5" height="1.5" fill="#888888" />
<rect x="1741" y="641.5" width="1.5" height="1.5" fill="#888888" />
<line x1="1541" y1="683.5" x2="1920" y2="683.5" stroke="#5a5a5a" stroke-width="1" />
<rect x="1547.5" y="649.5" width="121" height="34" fill="#444444" stroke="#565656" stroke-width="1" />
<path d="M1670.5,685 V649.5 Q1670.5,647.5 1672.5,647.5 H1795.5 Q1797.5,647.5 1797.5,649.5 V685" fill="#4a4a4a" stroke="#5a5a5a" stroke-width="1" />
<rect x="1671" y="682" width="126" height="3" fill="#4a4a4a" />
<text x="1563.5" y="673" font-size="15.5" fill="#d0d0d0" textLength="87.5" lengthAdjust="spacingAndGlyphs" >Tool Options</text>
<text x="1686.5" y="672" font-size="15.5" fill="#d0d0d0" textLength="94" lengthAdjust="spacingAndGlyphs" >Brush Presets</text>
<circle cx="1559" cy="696" r="7.5" fill="none" stroke="#dcdcdc" stroke-width="1.4" />
<rect x="1555" y="695.5" width="8" height="5" fill="#dcdcdc" />
<path d="M1556.5,695.5 V693.5 A2.5,2.5 0 0 1 1561.5,693.5" fill="none" stroke="#dcdcdc" stroke-width="1.2" />
<text x="1572" y="703" font-size="15.5" fill="#d0d0d0" textLength="93.5" lengthAdjust="spacingAndGlyphs" >Brush Presets</text>
<rect x="1876.5" y="694.5" width="8" height="8" fill="none" stroke="#e0e0e0" stroke-width="1.2" />
<path d="M1880.5,694.5 V690.5 H1889.5 V698.5 H1884.5" fill="none" stroke="#e0e0e0" stroke-width="1.2" />
<path d="M1902,691 L1912,701 M1912,691 L1902,701" fill="none" stroke="#e0e0e0" stroke-width="1.4" />
<rect x="1549" y="711" width="237" height="29" fill="url(#cmb)" stroke="#3a3a3a" stroke-width="1" rx="1" />
<text x="1551" y="732" font-size="15.5" fill="#d2d2d2" textLength="19" lengthAdjust="spacingAndGlyphs" >All</text>
<path d="M1764,723.5 H1777 L1770.5,729.5 Z" fill="#b0b0b0" />
<rect x="1789.5" y="711.5" width="64" height="28.5" fill="#484848" stroke="#3c3c3c" stroke-width="1" rx="1" />
<path d="M1796.5,715.5 H1806.5 V735.5 L1801.5,731 L1796.5,735.5 Z" fill="none" stroke="#e4e4e4" stroke-width="1.4" />
<text x="1817" y="733" font-size="15.5" fill="#d0d0d0" textLength="24" lengthAdjust="spacingAndGlyphs" >Tag</text>
<path d="M1840,731.5 H1852 L1846,736.5 Z" fill="#b0b0b0" />
<rect x="1856.5" y="711.5" width="29" height="28.5" fill="#484848" stroke="#3c3c3c" stroke-width="1" rx="1" />
<rect x="1862" y="718" width="18" height="2.5" fill="#e4e4e4" />
<rect x="1862" y="725" width="18" height="2.5" fill="#e4e4e4" />
<rect x="1862" y="732" width="18" height="2.5" fill="#e4e4e4" />
<rect x="1890.5" y="711.5" width="27" height="28.5" fill="#484848" stroke="#3c3c3c" stroke-width="1" rx="1" />
<rect x="1892.5" y="714.5" width="22.5" height="22" fill="none" stroke="#e4e4e4" stroke-width="1.3" />
<path d="M1902.5,716 L1904.5,718 L1902.5,720 L1904.5,722 L1902.5,724" fill="none" stroke="#e4e4e4" stroke-width="1" />
<rect x="1548" y="742" width="300" height="205" fill="#2a2a2a" />
<rect x="1848" y="742" width="50" height="205" fill="#3a3a3a" />
<defs><filter id="sblur" x="-30%" y="-30%" width="160%" height="160%"><feGaussianBlur stdDeviation="2.2"/></filter><linearGradient id="ferr" x1="0" y1="0" x2="0" y2="1"><stop offset="0" stop-color="#ffffff"/><stop offset="0.45" stop-color="#d8d0e8"/><stop offset="0.7" stop-color="#a898c0"/><stop offset="1" stop-color="#e0dcea"/></linearGradient><filter id="cblur" x="-5%" y="-5%" width="110%" height="110%"><feGaussianBlur stdDeviation="0.45"/></filter></defs>
<defs><radialGradient id="cellg" cx="0.4" cy="0.3" r="0.9"><stop offset="0" stop-color="#e2e2e2"/><stop offset="1" stop-color="#cacaca"/></radialGradient><clipPath id="gridclip"><rect x="1548" y="742.5" width="300" height="204"/></clipPath></defs>
<g clip-path="url(#gridclip)">
<svg x="1549" y="726.8" width="58" height="58" overflow="hidden">
<rect x="0" y="0" width="58" height="58" fill="url(#cellg)" />
<g filter="url(#cblur)">
<path d="M17,39 C16,50 34,50 58,45" fill="none" stroke="#111" stroke-width="1.8" />
<g transform="translate(22.5,36.5) rotate(-36)"><path d="M0,-0.25 L5,-1.25 L5,1.25 L0,0.25 Z" fill="#666" /><path d="M5,-1.25 L11,-2.5 L11,2.5 L5,1.25 Z" fill="#bbbbbb" /><path d="M5,-0.7 L11,-1.4" stroke="#ffffff" stroke-opacity="0.3" stroke-width="0.8"/><path d="M11,-2.5 L19,-3.5 L19,3.5 L11,2.5 Z" fill="#dde" /><path d="M11,-1.4 L19,-1.96" stroke="#ffffff" stroke-opacity="0.3" stroke-width="1.05"/><path d="M19,-3.5 L39,-4.5 L39,4.5 L19,3.5 Z" fill="#2a7a9a" /><path d="M19,-1.96 L39,-2.52" stroke="#ffffff" stroke-opacity="0.3" stroke-width="1.3499999999999999"/></g>
</g>
</svg>
<svg x="1609" y="726.8" width="58" height="58" overflow="hidden">
<rect x="0" y="0" width="58" height="58" fill="url(#cellg)" />
<g filter="url(#cblur)">
<path d="M14,46 L31,41 L25,51 C40,48 50,44 58,39" fill="none" stroke="#111" stroke-width="1.5" />
<g transform="translate(21.5,36.5) rotate(-38)"><path d="M0,-0.25 L8,-1.25 L8,1.25 L0,0.25 Z" fill="#999" /><path d="M8,-2.0 L26,-3.0 L26,3.0 L8,2.0 Z" fill="#e8e8e8" /><path d="M8,-1.12 L26,-1.68" stroke="#ffffff" stroke-opacity="0.3" stroke-width="0.8999999999999999"/><path d="M26,-3.0 L32,-3.0 L32,3.0 L26,3.0 Z" fill="#c8c040" /><path d="M26,-1.68 L32,-1.68" stroke="#ffffff" stroke-opacity="0.3" stroke-width="0.8999999999999999"/></g>
</g>
</svg>
<svg x="1669" y="726.8" width="58" height="58" overflow="hidden">
<rect x="0" y="0" width="58" height="58" fill="url(#cellg)" />
<g filter="url(#cblur)">
<path d="M16,50 L35,43 L37,50 L58,43" fill="none" stroke="#ffffff" stroke-width="3.2" opacity="0.8"/>
<path d="M16,50 L35,43 L37,50 L58,43" fill="none" stroke="#111" stroke-width="1.8" />
<g transform="translate(19,39.5) rotate(-38)"><path d="M0,-0.25 L14,-3.5 L14,3.5 L0,0.25 Z" fill="#c8c8c8" /><path d="M0,-0.14 L14,-1.96" stroke="#ffffff" stroke-opacity="0.3" stroke-width="1.05"/><path d="M14,-3.5 L24,-4.0 L24,4.0 L14,3.5 Z" fill="#a8a8a8" /><path d="M14,-1.96 L24,-2.24" stroke="#ffffff" stroke-opacity="0.3" stroke-width="1.2"/><path d="M24,-4.0 L44,-4.0 L44,4.0 L24,4.0 Z" fill="#1a1a1a" /><path d="M24,-2.24 L44,-2.24" stroke="#ffffff" stroke-opacity="0.3" stroke-width="1.2"/></g>
</g>
</svg>
<svg x="1729" y="726.8" width="58" height="58" overflow="hidden">
<rect x="0" y="0" width="58" height="58" fill="url(#cellg)" />
<g filter="url(#cblur)">
<path d="M20,40 C18,52 36,54 58,45 L58,41 C40,48 26,48 20,40 Z" fill="#111" />
<g transform="translate(23.5,33) rotate(-38)"><path d="M0,-0.25 L4,-2.0 L4,2.0 L0,0.25 Z" fill="#222" /><path d="M0,-0.14 L4,-1.12" stroke="#ffffff" stroke-opacity="0.3" stroke-width="0.8"/><path d="M4,-2.0 L12,-3.5 L12,3.5 L4,2.0 Z" fill="#b89a70" /><path d="M4,-1.12 L12,-1.96" stroke="#ffffff" stroke-opacity="0.3" stroke-width="1.05"/><path d="M12,-3.5 L37,-4.0 L37,4.0 L12,3.5 Z" fill="#c8aa80" /><path d="M12,-1.96 L37,-2.24" stroke="#ffffff" stroke-opacity="0.3" stroke-width="1.2"/></g>
</g>
</svg>
<svg x="1789" y="726.8" width="58" height="58" overflow="hidden">
<rect x="0" y="0" width="58" height="58" fill="url(#cellg)" />
<g filter="url(#cblur)">
<path d="M15,40 C14,53 34,54 58,37 L58,31 C44,44 26,48 15,40 Z" fill="#141414" />
<g transform="translate(20.5,34.5) rotate(-40)"><path d="M0,-0.5 L16,-5.0 L16,5.0 L0,0.5 Z" fill="#1a1a1a" /><path d="M0,-0.28 L16,-2.8" stroke="#ffffff" stroke-opacity="0.3" stroke-width="1.5"/><path d="M16,-5.0 L22,-4.5 L22,4.5 L16,5.0 Z" fill="#333" /><path d="M16,-2.8 L22,-2.52" stroke="#ffffff" stroke-opacity="0.3" stroke-width="1.3499999999999999"/><path d="M22,-4.0 L42,-4.0 L42,4.0 L22,4.0 Z" fill="#b8a080" /><path d="M22,-2.24 L42,-2.24" stroke="#ffffff" stroke-opacity="0.3" stroke-width="1.2"/></g>
</g>
</svg>
<svg x="1549" y="786.8" width="58" height="58" overflow="hidden">
<rect x="0" y="0" width="58" height="58" fill="url(#cellg)" />
<g filter="url(#cblur)">
<path d="M22,40 C28,34 34,46 40,40 C46,35 52,46 58,42" fill="none" stroke="#8a8a8a" stroke-width="6" stroke-linecap="round" filter="url(#cblur)"/>
<path d="M10,40 C12,32 22,36 20,44 C18,52 10,50 10,40 Z" fill="#2a2a2a" />
<path d="M11,15 A5,5 0 0 1 20,12" fill="none" stroke="#7a7a7a" stroke-width="1.6" />
<path d="M21,15 A5,5 0 0 1 12,18" fill="none" stroke="#7a7a7a" stroke-width="1.6" />
<path d="M22,10 L21,15 L17,12 Z" fill="#7a7a7a" />
<path d="M10,20 L11,15 L15,18 Z" fill="#7a7a7a" />
<g transform="translate(24.5,33.5) rotate(-40)"><path d="M0,-1.0 L3,-2.0 L3,2.0 L0,1.0 Z" fill="#333" /><path d="M0,-0.56 L3,-1.12" stroke="#ffffff" stroke-opacity="0.3" stroke-width="0.8"/><path d="M3,-2.5 L23,-5.0 L23,5.0 L3,2.5 Z" fill="#3a3a4a" /><path d="M3,-1.4 L23,-2.8" stroke="#ffffff" stroke-opacity="0.3" stroke-width="1.5"/><path d="M23,-5.0 L48,-5.5 L48,5.5 L23,5.0 Z" fill="#4a6ab8" /><path d="M23,-2.8 L48,-3.08" stroke="#ffffff" stroke-opacity="0.3" stroke-width="1.65"/></g>
</g>
</svg>
<svg x="1609" y="786.8" width="58" height="58" overflow="hidden">
<rect x="0" y="0" width="58" height="58" fill="url(#cellg)" />
<g filter="url(#cblur)">
<path d="M19,42 C18,52 28,50 40,42 C36,50 42,52 58,43" fill="none" stroke="#333" stroke-width="3.2" />
<g transform="translate(25.5,32.5) rotate(-40)"><path d="M0,-1.5 L4,-2.5 L4,2.5 L0,1.5 Z" fill="#b88a8a" /><path d="M0,-0.84 L4,-1.4" stroke="#ffffff" stroke-opacity="0.3" stroke-width="0.8"/><path d="M4,-2.5 L20,-5.5 L20,5.5 L4,2.5 Z" fill="#5a4a3a" /><path d="M4,-1.4 L20,-3.08" stroke="#ffffff" stroke-opacity="0.3" stroke-width="1.65"/><path d="M20,-5.5 L45,-6.0 L45,6.0 L20,5.5 Z" fill="#d07a9a" /><path d="M20,-3.08 L45,-3.36" stroke="#ffffff" stroke-opacity="0.3" stroke-width="1.7999999999999998"/></g>
</g>
</svg>
<svg x="1669" y="786.8" width="58" height="58" overflow="hidden">
<rect x="0" y="0" width="58" height="58" fill="url(#cellg)" />
<g filter="url(#cblur)">
<path d="M14,40 C26,36 40,44 58,40 L58,58 L24,58 C18,50 14,46 14,40 Z" fill="#2a2a2a" opacity="0.8" filter="url(#sblur)"/>
<path d="M11,15 A5,5 0 0 1 20,12" fill="none" stroke="#7a7a7a" stroke-width="1.6" />
<path d="M21,15 A5,5 0 0 1 12,18" fill="none" stroke="#7a7a7a" stroke-width="1.6" />
<path d="M22,10 L21,15 L17,12 Z" fill="#7a7a7a" />
<path d="M10,20 L11,15 L15,18 Z" fill="#7a7a7a" />
<g transform="translate(21,32) rotate(-40)"><path d="M0,-2.0 L5,-3.0 L5,3.0 L0,2.0 Z" fill="#5ab0e0" /><path d="M0,-1.12 L5,-1.68" stroke="#ffffff" stroke-opacity="0.3" stroke-width="0.8999999999999999"/><path d="M5,-3.0 L19,-7.0 L19,7.0 L5,3.0 Z" fill="#6a6040" /><path d="M5,-1.68 L19,-3.92" stroke="#ffffff" stroke-opacity="0.3" stroke-width="2.1"/><path d="M19,-7.0 L49,-8.0 L49,8.0 L19,7.0 Z" fill="#5aa0d8" /><path d="M19,-3.92 L49,-4.48" stroke="#ffffff" stroke-opacity="0.3" stroke-width="2.4"/></g>
</g>
</svg>
<svg x="1729" y="786.8" width="58" height="58" overflow="hidden">
<rect x="0" y="0" width="58" height="58" fill="url(#cellg)" />
<g filter="url(#cblur)">
<path d="M10,40 C24,34 40,40 50,32 C56,36 56,50 46,54 L12,55 Z" fill="#8a8a8a" opacity="0.75" filter="url(#sblur)"/>
<g transform="translate(20.3,34.7) rotate(-40)"><path d="M0,-3.5 L5,-4.0 L5,4.0 L0,3.5 Z" fill="#222" /><path d="M0,-1.96 L5,-2.24" stroke="#ffffff" stroke-opacity="0.3" stroke-width="1.2"/><path d="M5,-4.5 L15,-5.5 L15,5.5 L5,4.5 Z" fill="#8a8a8a" /><path d="M5,-2.52 L15,-3.08" stroke="#ffffff" stroke-opacity="0.3" stroke-width="1.65"/><path d="M15,-5.5 L23,-10.0 L23,10.0 L15,5.5 Z" fill="#a0a0a0" /><path d="M15,-3.08 L23,-5.6" stroke="#ffffff" stroke-opacity="0.3" stroke-width="3.0"/><path d="M23,-10.0 L53,-10.0 L53,10.0 L23,10.0 Z" fill="#7a7a7a" /><path d="M23,-5.6 L53,-5.6" stroke="#ffffff" stroke-opacity="0.3" stroke-width="3.0"/></g>
<g transform="translate(33,22) rotate(-40)"><path d="M0,0.0 L25,-6.0 L25,6.0 L0,0.0 Z" fill="#4a7ac0" /><path d="M0,0.0 L25,-3.36" stroke="#ffffff" stroke-opacity="0.3" stroke-width="1.7999999999999998"/></g>
</g>
</svg>
<svg x="1789" y="786.8" width="58" height="58" overflow="hidden">
<rect x="0" y="0" width="58" height="58" fill="url(#cellg)" />
<g filter="url(#cblur)">
<path d="M22,40 C36,38 40,30 50,30 C58,36 56,52 46,54 L22,52 Z" fill="#606060" opacity="0.75" filter="url(#sblur)"/>
<path d="M12,38 L20,44 C22,52 18,56 12,54 C9,50 9,42 12,38 Z" fill="#111" />
<g transform="translate(19.4,34.7) rotate(-40)"><path d="M0,-3.5 L5,-4.0 L5,4.0 L0,3.5 Z" fill="#111" /><path d="M0,-1.96 L5,-2.24" stroke="#ffffff" stroke-opacity="0.3" stroke-width="1.2"/><path d="M5,-4.5 L15,-5.5 L15,5.5 L5,4.5 Z" fill="#3a3a3a" /><path d="M5,-2.52 L15,-3.08" stroke="#ffffff" stroke-opacity="0.3" stroke-width="1.65"/><path d="M15,-5.5 L23,-10.0 L23,10.0 L15,5.5 Z" fill="#555" /><path d="M15,-3.08 L23,-5.6" stroke="#ffffff" stroke-opacity="0.3" stroke-width="3.0"/><path d="M23,-10.0 L53,-10.0 L53,10.0 L23,10.0 Z" fill="#4a4a4a" /><path d="M23,-5.6 L53,-5.6" stroke="#ffffff" stroke-opacity="0.3" stroke-width="3.0"/></g>
<g transform="translate(32,22) rotate(-40)"><path d="M0,0.0 L25,-6.0 L25,6.0 L0,0.0 Z" fill="#4a7ac0" /><path d="M0,0.0 L25,-3.36" stroke="#ffffff" stroke-opacity="0.3" stroke-width="1.7999999999999998"/></g>
</g>
</svg>
<svg x="1549" y="846.8" width="58" height="58" overflow="hidden">
<rect x="0" y="0" width="58" height="58" fill="url(#cellg)" />
<g filter="url(#cblur)">
<path d="M16,38 C18,50 28,48 36,46 C42,46 42,52 46,52 C50,49 54,50 58,50" fill="none" stroke="#111" stroke-width="2.6" />
<g transform="translate(20.4,32.9) rotate(-40)"><path d="M0,0 C4.5,-1.5 9.0,-3.0 15,-3.0 L15,3.0 C9.0,3.0 4.5,1.2000000000000002 0,0 Z" fill="#5a2a2a"/><path d="M15,-3.0 L28,-3.25 L28,3.25 L15,3.0 Z" fill="url(#ferr)"/><path d="M28,-3.5 L58,-4.5 L58,4.5 L28,3.5 Z" fill="#8aa03a" /><path d="M28,-1.96 L58,-2.52" stroke="#ffffff" stroke-opacity="0.3" stroke-width="1.3499999999999999"/></g>
</g>
</svg>
<svg x="1609" y="846.8" width="58" height="58" overflow="hidden">
<rect x="0" y="0" width="58" height="58" fill="url(#cellg)" />
<g filter="url(#cblur)">
<path d="M30,46 C40,42 46,48 56,52" fill="none" stroke="#aaaaaa" stroke-width="6" opacity="0.8" filter="url(#cblur)"/>
<path d="M10.0,36.0 C7,48 20,55 36,47" fill="none" stroke="#111" stroke-width="1.7" />
<path d="M11.6,37.2 C8,48 20,55 36,47" fill="none" stroke="#111" stroke-width="1.7" />
<path d="M13.2,38.4 C9,48 20,55 36,47" fill="none" stroke="#111" stroke-width="1.7" />
<path d="M14.8,39.6 C10,48 20,55 36,47" fill="none" stroke="#111" stroke-width="1.7" />
<path d="M16.4,40.8 C11,48 20,55 36,47" fill="none" stroke="#111" stroke-width="1.7" />
<path d="M18.0,42.0 C12,48 20,55 36,47" fill="none" stroke="#111" stroke-width="1.7" />
<g transform="translate(23,35) rotate(-45)"><rect x="0" y="-5.5" width="15" height="11" rx="4.95" fill="#b0b090"/><path d="M2,-2.75 H13" stroke="#ffffff" stroke-opacity="0.25" stroke-width="1.65"/><path d="M3,2.2 H13" stroke="#000000" stroke-opacity="0.15" stroke-width="2.2"/><path d="M13,-4.5 L25,-4.5 L25,4.5 L13,4.5 Z" fill="url(#ferr)"/><path d="M25,-4.0 L55,-4.0 L55,4.0 L25,4.0 Z" fill="#8a8a8a" /><path d="M25,-2.24 L55,-2.24" stroke="#ffffff" stroke-opacity="0.3" stroke-width="1.2"/></g>
</g>
</svg>
<svg x="1669" y="846.8" width="58" height="58" overflow="hidden">
<rect x="0" y="0" width="58" height="58" fill="url(#cellg)" />
<g filter="url(#cblur)">
<path d="M10,40 C12,56 36,58 58,44 L58,54 C40,60 14,60 10,40 Z" fill="#2a2a2a" opacity="0.8"/>
<path d="M11.0,40 C14,54 36,56 58,42" fill="none" stroke="#111" stroke-width="1.8" />
<path d="M12.2,41 C14,54 36,56 58,44" fill="none" stroke="#111" stroke-width="1.8" />
<path d="M13.4,42 C14,54 36,56 58,46" fill="none" stroke="#111" stroke-width="1.8" />
<path d="M14.6,43 C14,54 36,56 58,48" fill="none" stroke="#111" stroke-width="1.8" />
<path d="M15.8,44 C14,54 36,56 58,50" fill="none" stroke="#111" stroke-width="1.8" />
<path d="M17.0,45 C14,54 36,56 58,52" fill="none" stroke="#111" stroke-width="1.8" />
<g transform="translate(22,35) rotate(-42)"><rect x="0" y="-7.5" width="16" height="15" rx="6.3" fill="#2e2626"/><path d="M2,-3.75 H14" stroke="#ffffff" stroke-opacity="0.25" stroke-width="2.25"/><path d="M3,3.0 H14" stroke="#000000" stroke-opacity="0.15" stroke-width="3.0"/><path d="M14,-6.5 L30,-6.0 L30,6.0 L14,6.5 Z" fill="url(#ferr)"/><path d="M30,-5.5 L60,-5.5 L60,5.5 L30,5.5 Z" fill="#111" /><path d="M30,-3.08 L60,-3.08" stroke="#ffffff" stroke-opacity="0.3" stroke-width="1.65"/></g>
</g>
</svg>
<svg x="1729" y="846.8" width="58" height="58" overflow="hidden">
<rect x="0" y="0" width="58" height="58" fill="url(#cellg)" />
<g filter="url(#cblur)">
<path d="M16,40 C20,56 40,52 56,46" fill="none" stroke="#3a3a3a" stroke-width="2.6" opacity="0.75" filter="url(#cblur)"/>
<path d="M18,40 C21,56 40,52 56,47" fill="none" stroke="#3a3a3a" stroke-width="2.6" opacity="0.75" filter="url(#cblur)"/>
<path d="M20,40 C22,56 40,52 56,48" fill="none" stroke="#3a3a3a" stroke-width="2.6" opacity="0.75" filter="url(#cblur)"/>
<path d="M22,40 C23,56 40,52 56,49" fill="none" stroke="#3a3a3a" stroke-width="2.6" opacity="0.75" filter="url(#cblur)"/>
<path d="M24,40 C24,56 40,52 56,50" fill="none" stroke="#3a3a3a" stroke-width="2.6" opacity="0.75" filter="url(#cblur)"/>
<g transform="translate(18.3,31.9) rotate(-40)"><path d="M0,0 C4.8,-2.5 9.6,-5.0 16,-5.0 L16,5.0 C9.6,5.0 4.8,2.0 0,0 Z" fill="#4a2428"/><path d="M16,-5.0 L32,-4.5 L32,4.5 L16,5.0 Z" fill="#9a9a9a" /><path d="M16,-2.8 L32,-2.52" stroke="#ffffff" stroke-opacity="0.3" stroke-width="1.3499999999999999"/><path d="M32,-4.0 L62,-4.5 L62,4.5 L32,4.0 Z" fill="#7a9a4a" /><path d="M32,-2.24 L62,-2.52" stroke="#ffffff" stroke-opacity="0.3" stroke-width="1.3499999999999999"/></g>
</g>
</svg>
<svg x="1789" y="846.8" width="58" height="58" overflow="hidden">
<rect x="0" y="0" width="58" height="58" fill="url(#cellg)" />
<g filter="url(#cblur)">
<path d="M8,50 C10,44 14,42 18,48 C20,42 24,42 26,48 C28,42 32,43 34,48 C40,52 50,52 58,52 L58,56 C40,58 16,58 8,50 Z" fill="#1e1e1e" />
<g transform="translate(22,34) rotate(-42)"><rect x="0" y="-10.0" width="19" height="20" rx="7.65" fill="#d8d0a0"/><path d="M2,-5.0 H17" stroke="#ffffff" stroke-opacity="0.25" stroke-width="3.0"/><path d="M3,4.0 H17" stroke="#000000" stroke-opacity="0.15" stroke-width="4.0"/><path d="M17,-7.0 L33,-6.5 L33,6.5 L17,7.0 Z" fill="url(#ferr)"/><path d="M33,-6.0 L63,-5.5 L63,5.5 L33,6.0 Z" fill="#c8c0d8" /><path d="M33,-3.36 L63,-3.08" stroke="#ffffff" stroke-opacity="0.3" stroke-width="1.65"/></g>
</g>
</svg>
<svg x="1549" y="906.8" width="58" height="58" overflow="hidden">
<rect x="0" y="0" width="58" height="58" fill="url(#cellg)" />
<g filter="url(#cblur)">
<path d="M4,42 C14,32 30,32 40,42 Z" fill="#777" opacity="0.8" filter="url(#sblur)"/>
<path d="M26,28 C22,20 26,6 34,2 L50,-4 C60,-6 62,8 56,16 C50,24 36,32 26,28 Z" fill="#333" />
</g>
</svg>
<svg x="1609" y="906.8" width="58" height="58" overflow="hidden">
<rect x="0" y="0" width="58" height="58" fill="url(#cellg)" />
<g filter="url(#cblur)">
<path d="M8,42 C16,32 30,32 40,42 Z" fill="#888" opacity="0.8" filter="url(#sblur)"/>
<path d="M40,14 L58,-4" fill="none" stroke="#6a6a6a" stroke-width="3.5" />
<g transform="translate(28,30) rotate(-58)"><path d="M0,-6.0 L24,-6.0 L24,6.0 L0,6.0 Z" fill="#f0f0f0" /><path d="M0,-3.36 L24,-3.36" stroke="#ffffff" stroke-opacity="0.3" stroke-width="1.7999999999999998"/><path d="M24,-6.0 L26,-6.0 L26,6.0 L24,6.0 Z" fill="#ddd" /><path d="M24,-3.36 L26,-3.36" stroke="#ffffff" stroke-opacity="0.3" stroke-width="1.7999999999999998"/></g>
</g>
</svg>
<svg x="1669" y="906.8" width="58" height="58" overflow="hidden">
<rect x="0" y="0" width="58" height="58" fill="url(#cellg)" />
<g filter="url(#cblur)">
<circle cx="16.0" cy="38" r="1.4" fill="#222" />
<circle cx="18.5" cy="39" r="1.4" fill="#222" />
<circle cx="21.0" cy="38" r="1.4" fill="#222" />
<circle cx="23.5" cy="39" r="1.4" fill="#222" />
<circle cx="26.0" cy="38" r="1.4" fill="#222" />
<circle cx="28.5" cy="39" r="1.4" fill="#222" />
<g transform="translate(23,34) rotate(-42)"><rect x="0" y="-10.0" width="20" height="20" rx="8.1" fill="#c8b478"/><path d="M2,-5.0 H18" stroke="#ffffff" stroke-opacity="0.25" stroke-width="3.0"/><path d="M3,4.0 H18" stroke="#000000" stroke-opacity="0.15" stroke-width="4.0"/><path d="M18,-8.0 L32,-7.5 L32,7.5 L18,8.0 Z" fill="url(#ferr)"/><path d="M32,-6.5 L62,-6.0 L62,6.0 L32,6.5 Z" fill="#c8bedc" /><path d="M32,-3.64 L62,-3.36" stroke="#ffffff" stroke-opacity="0.3" stroke-width="1.7999999999999998"/></g>
</g>
</svg>
<svg x="1729" y="906.8" width="58" height="58" overflow="hidden">
<rect x="0" y="0" width="58" height="58" fill="url(#cellg)" />
<g filter="url(#cblur)">
<g transform="translate(20,33) rotate(-40)"><path d="M0,-3.0 L14,-6.5 L14,6.5 L0,3.0 Z" fill="#b8aa60" /><path d="M0,-1.68 L14,-3.64" stroke="#ffffff" stroke-opacity="0.3" stroke-width="1.95"/><path d="M14,-4.0 L26,-3.5 L26,3.5 L14,4.0 Z" fill="#c8a888" /><path d="M14,-2.24 L26,-1.96" stroke="#ffffff" stroke-opacity="0.3" stroke-width="1.05"/><path d="M26,-3.5 L58,-5.5 L58,5.5 L26,3.5 Z" fill="#c87a30" /><path d="M26,-1.96 L58,-3.08" stroke="#ffffff" stroke-opacity="0.3" stroke-width="1.65"/></g>
</g>
</svg>
<svg x="1789" y="906.8" width="58" height="58" overflow="hidden">
<rect x="0" y="0" width="58" height="58" fill="url(#cellg)" />
<g filter="url(#cblur)">
<g transform="translate(26,31) rotate(-42)"><rect x="0" y="-6.5" width="14" height="13" rx="5.4" fill="#ddd4a8"/><path d="M2,-3.25 H12" stroke="#ffffff" stroke-opacity="0.25" stroke-width="1.95"/><path d="M3,2.6 H12" stroke="#000000" stroke-opacity="0.15" stroke-width="2.6"/><path d="M12,-4.5 L28,-4.5 L28,4.5 L12,4.5 Z" fill="url(#ferr)"/><path d="M28,-4.0 L58,-4.0 L58,4.0 L28,4.0 Z" fill="#1a1a1a" /><path d="M28,-2.24 L58,-2.24" stroke="#ffffff" stroke-opacity="0.3" stroke-width="1.2"/></g>
</g>
</svg>
</g>
<rect x="1898.5" y="743.5" width="19" height="19" fill="#444444" stroke="#525252" stroke-width="1" />
<path d="M1902,756 H1914 L1908,750 Z" fill="#a0a0a0" />
<rect x="1898.5" y="789.5" width="19" height="37" fill="#474747" stroke="#555555" stroke-width="1" />
<rect x="1898.5" y="927.5" width="19" height="18" fill="#444444" stroke="#525252" stroke-width="1" />
<path d="M1902,933 H1914 L1908,939 Z" fill="#a0a0a0" />
<rect x="1547.5" y="950" width="247.5" height="27" fill="#393939" rx="2" />
<text x="1550.5" y="970" font-size="15.5" fill="#8c8c8c" textLength="47" lengthAdjust="spacingAndGlyphs" >Search</text>
<rect x="1805.5" y="952.5" width="19.5" height="20" fill="#393939" rx="1" />
<path d="M1808.5,962 L1812,969.5 L1820.5,955" fill="none" stroke="#e0e0e0" stroke-width="2" />
<text x="1834" y="969" font-size="15.5" fill="#d0d0d0" textLength="78.5" lengthAdjust="spacingAndGlyphs" >Filter in Tag</text>
<rect x="0" y="980" width="1920" height="40" fill="#474747" />
<rect x="7.5" y="991.5" width="14.5" height="14.5" fill="none" stroke="#cfcfcf" stroke-width="1.2" />
<circle cx="14.75" cy="998.75" r="4" fill="none" stroke="#9a9a9a" stroke-width="1" stroke-dasharray="1.2,1.2"/>
<text x="37" y="1007" font-size="16.5" fill="#cdcdcd" textLength="117.5" lengthAdjust="spacingAndGlyphs" >c) Pencil-4 Soft</text>
<text x="424.5" y="1007.5" font-size="16.5" fill="#cdcdcd" textLength="370" lengthAdjust="spacingAndGlyphs" >RGB/Alpha (32-bit float/channel)  sRGB built-in</text>
<rect x="1288" y="984" width="210" height="33" fill="none" stroke="#3f3f3f" stroke-width="1" />
<rect x="1289" y="985" width="5" height="29" fill="#56789a" rx="1.5" />
<text x="1293" y="1007.5" font-size="16.5" fill="#cdcdcd" textLength="199" lengthAdjust="spacingAndGlyphs" >1,080 x 1,350 (136.2 MiB)</text>
<line x1="1341" y1="1009.5" x2="1349" y2="1009.5" stroke="#cdcdcd" stroke-width="1" />
<circle cx="1521.5" cy="999.5" r="15" fill="#333333" />
<line x1="1520" y1="999.5" x2="1537" y2="999.5" stroke="#e6e6e6" stroke-width="1.5" />
<circle cx="1520" cy="999.5" r="1.8" fill="#e6e6e6" />
<circle cx="1537" cy="999.5" r="1.8" fill="#e6e6e6" />
<text x="1575.5" y="1007.5" font-size="16.5" fill="#cdcdcd" textLength="40" lengthAdjust="spacingAndGlyphs" >0.00°</text>
<text x="1738" y="1007.5" font-size="16.5" fill="#cdcdcd" textLength="49" lengthAdjust="spacingAndGlyphs" >33.3%</text>
<rect x="1806" y="996" width="80" height="7" fill="#383838" rx="2" />
<rect x="1805" y="996" width="7" height="6" fill="#6a9ac8" />
<rect x="1812.5" y="990.5" width="18" height="18" fill="#474747" stroke="#333333" stroke-width="1" rx="2" />
<rect x="1888.5" y="985.5" width="27.5" height="28" fill="#474747" stroke="#3a3a3a" stroke-width="1" />
<rect x="1894.5" y="990.5" width="16" height="17" fill="none" stroke="#dedede" stroke-width="1.3" />
<rect x="1899.5" y="996" width="6" height="6" fill="#dedede" />
<rect x="0" y="1020" width="1920" height="60" fill="#1f1f1f" />
<rect x="883" y="1020" width="219" height="60" fill="#474747" />
<rect x="228" y="1076" width="208" height="4" fill="#c2b596" />
<rect x="448" y="1076" width="207" height="4" fill="#c2b596" />
<rect x="667" y="1076" width="208" height="4" fill="#c2b596" />
<rect x="885" y="1076" width="215" height="4" fill="#c2b596" />
<rect x="1110" y="1076" width="207" height="4" fill="#c2b596" />
<path d="M23.5,1039 L33.5,1037.6 V1049 H23.5 Z M35,1037.4 L48,1035.6 V1049 H35 Z M23.5,1050.5 H33.5 V1061.9 L23.5,1060.5 Z M35,1050.5 H48 V1064 L35,1062.1 Z" fill="#ffffff" />
<path d="M96,1040.5 H112 M96,1059.5 H112 M96,1040.5 V1043 M112,1040.5 V1043 M96,1059.5 V1057 M112,1059.5 V1057" fill="none" stroke="#ffffff" stroke-width="1.3" />
<rect x="96.5" y="1044.5" width="15" height="11" fill="none" stroke="#ffffff" stroke-width="1.3" />
<line x1="119.5" y1="1038" x2="119.5" y2="1062" stroke="#ffffff" stroke-width="1.3" />
<rect x="118" y="1046.5" width="3" height="3" fill="#ffffff" />
<path d="M168,1041 H177 L179,1043 H200 V1064 H168 Z" fill="#f4c542" />
<path d="M168,1045 H200 V1064 H168 Z" fill="#ffd966" />
<path d="M174,1053 H194 V1064 H189 V1057 H179 V1064 H174 Z" fill="#3a8fd8" />
<defs><linearGradient id="ff253" x1="0.8" y1="0" x2="0.3" y2="1"><stop offset="0" stop-color="#ffe83a"/><stop offset="0.45" stop-color="#ff9a2a"/><stop offset="0.8" stop-color="#ff3a4a"/><stop offset="1" stop-color="#e8207a"/></linearGradient></defs>
<path d="M258,1032.5 C265,1039 269,1045 269,1051 A16,16 0 1 1 240,1041.5 L242,1038 L244,1040 L246,1037 L248,1040 C251,1038 255,1037 258,1032.5 Z" fill="url(#ff253)" />
<circle cx="253.5" cy="1051.5" r="7.5" fill="#7a4ae8" />
<circle cx="252.5" cy="1052.5" r="5" fill="#6a50e0" />
<path d="M245,1047 C249,1043 255,1045 254,1049 C251,1048 247,1049 245,1047 Z" fill="#ffb030" />
<defs><linearGradient id="ff472" x1="0.8" y1="0" x2="0.3" y2="1"><stop offset="0" stop-color="#ffe83a"/><stop offset="0.45" stop-color="#ff9a2a"/><stop offset="0.8" stop-color="#ff3a4a"/><stop offset="1" stop-color="#e8207a"/></linearGradient></defs>
<path d="M477,1032.5 C484,1039 488,1045 488,1051 A16,16 0 1 1 459,1041.5 L461,1038 L463,1040 L465,1037 L467,1040 C470,1038 474,1037 477,1032.5 Z" fill="url(#ff472)" />
<circle cx="472.5" cy="1051.5" r="7.5" fill="#7a4ae8" />
<circle cx="471.5" cy="1052.5" r="5" fill="#6a50e0" />
<path d="M464,1047 C468,1043 474,1045 473,1049 C470,1048 466,1049 464,1047 Z" fill="#ffb030" />
<defs><linearGradient id="ff693" x1="0.8" y1="0" x2="0.3" y2="1"><stop offset="0" stop-color="#ffe83a"/><stop offset="0.45" stop-color="#ff9a2a"/><stop offset="0.8" stop-color="#ff3a4a"/><stop offset="1" stop-color="#e8207a"/></linearGradient></defs>
<path d="M698,1032.5 C705,1039 709,1045 709,1051 A16,16 0 1 1 680,1041.5 L682,1038 L684,1040 L686,1037 L688,1040 C691,1038 695,1037 698,1032.5 Z" fill="url(#ff693)" />
<circle cx="693.5" cy="1051.5" r="7.5" fill="#7a4ae8" />
<circle cx="692.5" cy="1052.5" r="5" fill="#6a50e0" />
<path d="M685,1047 C689,1043 695,1045 694,1049 C691,1048 687,1049 685,1047 Z" fill="#ffb030" />
<text x="274" y="1058" font-size="18" fill="#ffffff" textLength="48" lengthAdjust="spacingAndGlyphs" >mozil</text>
<path d="M270,1047 C270,1040 280,1037 300,1035 C340,1030 400,1026 450,1025.5 L496,1025.5 C506,1026 507,1038 500,1041 L330,1059 C292,1059 270,1055 270,1047 Z" fill="#82d2fb" />
<path d="M331,1050.5 C400,1049 600,1053 700,1050 L830,1050.5" fill="none" stroke="#82d2fb" stroke-width="17" stroke-linecap="round"/>
<text x="838" y="1057" font-size="18" fill="#ffffff" textLength="27" lengthAdjust="spacingAndGlyphs" >Ge...</text>
<defs><clipPath id="kc10190"><circle cx="914" cy="1050" r="14"/></clipPath><filter id="kf10190" x="-50%" y="-50%" width="200%" height="200%"><feGaussianBlur stdDeviation="3.9200000000000004"/></filter></defs><g clip-path="url(#kc10190)"><g filter="url(#kf10190)"><path d="M914,1050 L904.53,1029.70 L923.47,1029.70 Z" fill="#ff2cf8"/><path d="M914,1050 L921.66,1028.95 L935.05,1042.34 Z" fill="#ff55c8"/><path d="M914,1050 L932.35,1037.15 L935.64,1055.80 Z" fill="#ff9a8a"/><path d="M914,1050 L936.40,1050.00 L928.40,1067.16 Z" fill="#f8e060"/><path d="M914,1050 L932.35,1062.85 L915.95,1072.31 Z" fill="#c8f870"/><path d="M914,1050 L919.80,1071.64 L901.15,1068.35 Z" fill="#40f0e0"/><path d="M914,1050 L904.53,1070.30 L892.36,1055.80 Z" fill="#30d8ff"/><path d="M914,1050 L893.70,1059.47 L893.70,1040.53 Z" fill="#8aa0ff"/><path d="M914,1050 L892.95,1042.34 L906.34,1028.95 Z" fill="#c070ff"/><circle cx="914" cy="1050" r="4.8999999999999995" fill="#ffffff" opacity="0.5"/></g></g><circle cx="914" cy="1050" r="14" fill="none" stroke="#222" stroke-opacity="0.35" stroke-width="1.12"/><g transform="translate(914,1050) rotate(40)"><path d="M-18.2,0 L-1.68,-3.08 L-1.68,3.08 Z" fill="#44345a"/><rect x="-1.68" y="-2.1" width="2.8000000000000003" height="4.2" fill="#e0e0ea"/><ellipse cx="5.88" cy="0.7000000000000001" rx="3.64" ry="2.8000000000000003" fill="#0e0e0e"/></g>
<text x="936" y="1057" font-size="18" fill="#ffffff" textLength="151" lengthAdjust="spacingAndGlyphs" >yunjin wip.kra (13...</text>
<rect x="1120" y="1034" width="32" height="32" fill="#2f86d8" />
<path d="M1120,1066 V1056 L1131,1046 L1141,1056 L1146,1052 L1152,1058 V1066 Z" fill="#1b4a9a" />
<path d="M1120,1066 V1060 L1134,1052 L1152,1064 V1066 Z" fill="#24589e" />
<circle cx="1141" cy="1042" r="3" fill="#e8f4ff" />
<text x="1158" y="1057" font-size="18" fill="#ffffff" textLength="149" lengthAdjust="spacingAndGlyphs" >Screenshot (1376...</text>
<circle cx="1358" cy="1050" r="15" fill="#ffffff" />
<circle cx="1358" cy="1050" r="12.5" fill="#1a8ad8" />
<text x="1351" y="1058" font-size="21" fill="#ffffff" textLength="13" lengthAdjust="spacingAndGlyphs" font-weight="bold">?</text>
<circle cx="1369" cy="1059" r="6" fill="#f6b324" />
<rect x="1368.2" y="1055.5" width="1.6" height="5.5" fill="#ffffff" />
<circle cx="1437" cy="1046" r="11" fill="#f8c838" />
<path d="M1427,1064 C1421,1064 1420,1055 1427,1054 C1428,1046 1441,1045 1444,1052 C1452,1050 1457,1058 1453,1064 Z" fill="#d8ecff" />
<path d="M1427,1064 C1422,1064 1421,1059 1424,1057 C1430,1060 1445,1061 1455,1058 C1456,1062 1455,1064 1453,1064 Z" fill="#a8d0f0" />
<text x="1468" y="1059" font-size="19" fill="#ffffff" textLength="41" lengthAdjust="spacingAndGlyphs" >57°F</text>
<path d="M1536,1056 L1543.5,1048 L1551,1056" fill="none" stroke="#ffffff" stroke-width="1.4" />
<path d="M1570,1046 H1574 L1580,1041 V1061 L1574,1056 H1570 Z" fill="none" stroke="#ffffff" stroke-width="1.2" />
<path d="M1583,1048 L1589,1054 M1589,1048 L1583,1054" fill="none" stroke="#ffffff" stroke-width="1.2" />
<rect x="1605.5" y="1044.5" width="19" height="12" fill="none" stroke="#ffffff" stroke-width="1.3" />
<rect x="1607" y="1046" width="12" height="9" fill="#ffffff" />
<circle cx="1622" cy="1057" r="5" fill="#13a84a" />
<line x1="1622" y1="1054" x2="1622" y2="1060" stroke="#ffffff" stroke-width="1.2" />
<rect x="1641.5" y="1040.5" width="33" height="17" fill="none" stroke="#ffffff" stroke-width="1.3" />
<rect x="1645" y="1044" width="1.2" height="1.2" fill="#ffffff" />
<rect x="1645" y="1048" width="1.2" height="1.2" fill="#ffffff" />
<rect x="1648" y="1044" width="1.2" height="1.2" fill="#ffffff" />
<rect x="1648" y="1048" width="1.2" height="1.2" fill="#ffffff" />
<rect x="1651" y="1044" width="1.2" height="1.2" fill="#ffffff" />
<rect x="1651" y="1048" width="1.2" height="1.2" fill="#ffffff" />
<rect x="1654" y="1044" width="1.2" height="1.2" fill="#ffffff" />
<rect x="1654" y="1048" width="1.2" height="1.2" fill="#ffffff" />
<rect x="1657" y="1044" width="1.2" height="1.2" fill="#ffffff" />
<rect x="1657" y="1048" width="1.2" height="1.2" fill="#ffffff" />
<rect x="1660" y="1044" width="1.2" height="1.2" fill="#ffffff" />
<rect x="1660" y="1048" width="1.2" height="1.2" fill="#ffffff" />
<rect x="1663" y="1044" width="1.2" height="1.2" fill="#ffffff" />
<rect x="1663" y="1048" width="1.2" height="1.2" fill="#ffffff" />
<rect x="1666" y="1044" width="1.2" height="1.2" fill="#ffffff" />
<rect x="1666" y="1048" width="1.2" height="1.2" fill="#ffffff" />
<rect x="1669" y="1044" width="1.2" height="1.2" fill="#ffffff" />
<rect x="1669" y="1048" width="1.2" height="1.2" fill="#ffffff" />
<rect x="1672" y="1044" width="1.2" height="1.2" fill="#ffffff" />
<rect x="1672" y="1048" width="1.2" height="1.2" fill="#ffffff" />
<line x1="1646" y1="1053" x2="1670" y2="1053" stroke="#ffffff" stroke-width="1.2" />
<text x="1692" y="1057" font-size="18" fill="#ffffff" textLength="33.5" lengthAdjust="spacingAndGlyphs" >ENG</text>
<text x="1754.5" y="1043" font-size="18" fill="#ffffff" textLength="66" lengthAdjust="spacingAndGlyphs" >4:12 PM</text>
<text x="1752" y="1071" font-size="18" fill="#ffffff" textLength="72" lengthAdjust="spacingAndGlyphs" >1/6/2022</text>
<path d="M1858,1038.5 H1882.5 V1056 H1867 L1860,1063 V1056 H1858 Z" fill="#ffffff" />
<line x1="1862" y1="1043" x2="1878" y2="1043" stroke="#555" stroke-width="1" />
<line x1="1862" y1="1047" x2="1878" y2="1047" stroke="#555" stroke-width="1" />
<line x1="1862" y1="1051" x2="1878" y2="1051" stroke="#555" stroke-width="1" />
<circle cx="1881" cy="1062" r="11" fill="#1f1f1f" stroke="#9a9a9a" stroke-width="1.3" />
<text x="1877" y="1068.5" font-size="16" fill="#ffffff" textLength="8" lengthAdjust="spacingAndGlyphs" font-weight="bold">1</text>
<line x1="1913.5" y1="1020" x2="1913.5" y2="1080" stroke="#8a8a8a" stroke-width="1" />
</svg>
</body></html>
